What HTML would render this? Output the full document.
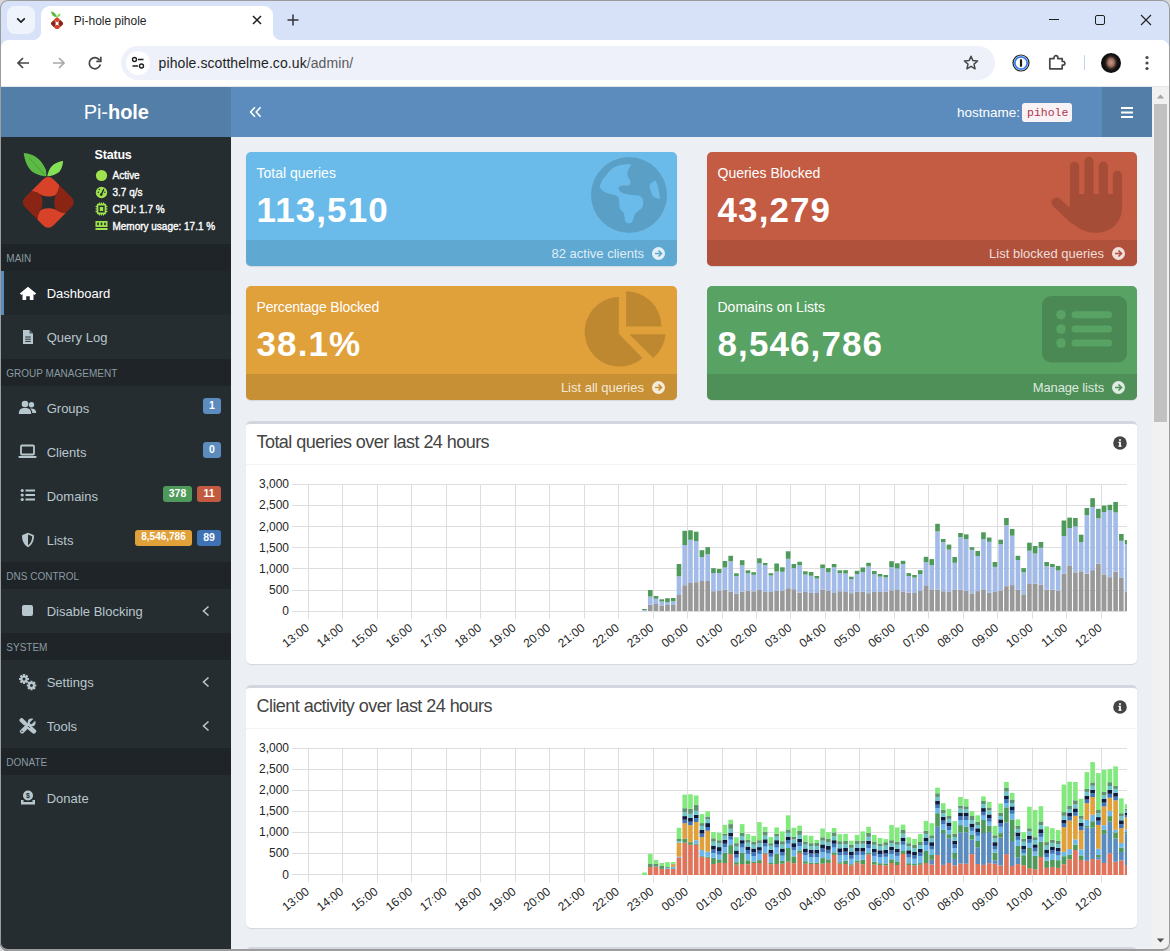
<!DOCTYPE html><html><head><meta charset="utf-8"><title>Pi-hole</title><style>*{box-sizing:border-box}html,body{margin:0;padding:0}
body{width:1170px;height:951px;overflow:hidden;position:relative;background:#d8d8d8;font-family:"Liberation Sans",sans-serif}
.a{position:absolute}.t{position:absolute;white-space:nowrap;line-height:1}
</style></head><body><div class="a" style="left:0px;top:0px;width:1170px;height:87px;background:#d7e2f8;"></div>
<div class="a" style="left:0px;top:40px;width:1170px;height:46px;background:#fff;"></div>
<div class="a" style="left:1px;top:40px;width:8px;height:8px;background:radial-gradient(circle at 100% 100%,#fff 7.5px,#d7e2f8 8.5px);"></div>
<div class="a" style="left:1161px;top:40px;width:8px;height:8px;background:radial-gradient(circle at 0 100%,#fff 7.5px,#d7e2f8 8.5px);"></div>
<div class="a" style="left:0px;top:86px;width:1170px;height:1px;background:#e4e6ea;"></div>
<div class="a" style="left:7px;top:6px;width:28px;height:28px;background:#eef3fc;border-radius:8px"></div>
<svg class="a" style="left:14px;top:13px" width="14" height="14" viewBox="0 0 14 14"><path d="M3.2 5.3 L7 9.1 L10.8 5.3" fill="none" stroke="#1f1f1f" stroke-width="1.7"/></svg>
<div class="a" style="left:41px;top:6px;width:232px;height:40px;background:#fff;border-radius:9px 9px 0 0"></div>
<div class="a" style="left:33px;top:32px;width:8px;height:8px;background:radial-gradient(circle at 0 0,#d7e2f8 7.5px,#fff 8.5px);"></div>
<div class="a" style="left:273px;top:32px;width:8px;height:8px;background:radial-gradient(circle at 100% 0,#d7e2f8 7.5px,#fff 8.5px);"></div>
<svg class="a" style="left:50px;top:11px" width="14" height="18" viewBox="1 1 54 74">
<path d="M3.7 3.1 C14 3.5 21.5 10 25.8 19.4 C26.5 22 26.3 24 26.3 26.3 C22 26 15 24.5 11 20.5 C7 16.5 4.5 10 3.7 3.1Z" fill="#5dbb45"/>
<path d="M9.5 8.5 L24.5 24.5" stroke="#3f8f33" stroke-width="0.7"/>
<path d="M43.1 11 C38 11.5 33 14 30 18.4 C28.5 21 27.5 24 27.3 26.3 C31 26 35 25 38.5 22.5 C41.5 20 42.8 15 43.1 11Z" fill="#84e055"/>
<defs><clipPath id="dm2"><path d="M25.4 9.2 Q30.3 4.3 35.2 9.2 L51.4 25.4 Q56.3 30.3 51.4 35.2 L35.2 51.4 Q30.3 56.3 25.4 51.4 L9.2 35.2 Q4.3 30.3 9.2 25.4Z"/></clipPath></defs>
<g transform="translate(-2 22) translate(30.3 30.3) scale(1.085) translate(-30.3 -30.3)"><g clip-path="url(#dm2)">
<path d="M10.2 20.9 L5 16 L30.3 -8 L44.6 5 L39.7 10.2 C41.2 12.5 40.6 19 37.5 23 C34.5 25.5 26.5 25.5 23 23.1 C19 20 12.5 19.4 10.2 20.9Z" fill="#d84229"/>
<path d="M10.2 20.9 L5 16 L30.3 -8 L44.6 5 L39.7 10.2 C41.2 12.5 40.6 19 37.5 23 C34.5 25.5 26.5 25.5 23 23.1 C19 20 12.5 19.4 10.2 20.9Z" fill="#8a2415" transform="rotate(90 30.3 30.3)"/>
<path d="M10.2 20.9 L5 16 L30.3 -8 L44.6 5 L39.7 10.2 C41.2 12.5 40.6 19 37.5 23 C34.5 25.5 26.5 25.5 23 23.1 C19 20 12.5 19.4 10.2 20.9Z" fill="#d84229" transform="rotate(180 30.3 30.3)"/>
<path d="M10.2 20.9 L5 16 L30.3 -8 L44.6 5 L39.7 10.2 C41.2 12.5 40.6 19 37.5 23 C34.5 25.5 26.5 25.5 23 23.1 C19 20 12.5 19.4 10.2 20.9Z" fill="#8a2415" transform="rotate(270 30.3 30.3)"/>
</g></g>
</svg>
<div class="t" style="left:73.80px;top:14.74px;font-size:12px;color:#1f1f1f;font-weight:normal;letter-spacing:0px;font-family:'Liberation Sans',sans-serif;">Pi-hole pihole</div>
<svg class="a" style="left:251px;top:14px" width="12" height="12" viewBox="0 0 12 12"><path d="M2 2 L10 10 M10 2 L2 10" stroke="#1f1f1f" stroke-width="1.5"/></svg>
<svg class="a" style="left:286px;top:13px" width="14" height="14" viewBox="0 0 14 14"><path d="M7 1.5 V12.5 M1.5 7 H12.5" stroke="#333" stroke-width="1.5"/></svg>
<div class="a" style="left:1049px;top:19px;width:10px;height:1px;background:#1f1f1f;"></div>
<div class="a" style="left:1095px;top:15px;width:10px;height:10px;background:transparent;border:1px solid #1f1f1f;border-radius:2px"></div>
<svg class="a" style="left:1140px;top:14px" width="12" height="12" viewBox="0 0 12 12"><path d="M1 1 L11 11 M11 1 L1 11" stroke="#1f1f1f" stroke-width="1.1"/></svg>
<svg class="a" style="left:15px;top:55px" width="16" height="16" viewBox="0 0 16 16"><path d="M14 8 H3 M8 3 L3 8 L8 13" fill="none" stroke="#474747" stroke-width="1.7"/></svg>
<svg class="a" style="left:51px;top:55px" width="16" height="16" viewBox="0 0 16 16"><path d="M2 8 H13 M8 3 L13 8 L8 13" fill="none" stroke="#a8a8a8" stroke-width="1.7"/></svg>
<svg class="a" style="left:87px;top:55px" width="16" height="16" viewBox="0 0 16 16"><path d="M12.6 5.2 A5.6 5.6 0 1 0 13.3 9.5" fill="none" stroke="#474747" stroke-width="1.7"/><path d="M13.8 1.8 V6.3 H9.3" fill="none" stroke="#474747" stroke-width="1.7"/></svg>
<div class="a" style="left:121px;top:46px;width:874px;height:34px;background:#eef1f9;border-radius:17px"></div>
<div class="a" style="left:126px;top:51px;width:24px;height:24px;background:#fff;border-radius:12px"></div>
<svg class="a" style="left:130px;top:55px" width="16" height="16" viewBox="0 0 16 16"><circle cx="4.5" cy="4.5" r="2" fill="none" stroke="#1f1f1f" stroke-width="1.4"/><path d="M8 4.5 H13.5" stroke="#1f1f1f" stroke-width="1.5"/><circle cx="11.5" cy="11" r="2" fill="none" stroke="#1f1f1f" stroke-width="1.4"/><path d="M2.5 11 H8" stroke="#1f1f1f" stroke-width="1.5"/></svg>
<div class="t" style="left:158.60px;top:56.45px;font-size:14px;color:#1f1f1f;font-weight:normal;letter-spacing:0.08px;font-family:'Liberation Sans',sans-serif;">pihole.scotthelme.co.uk<span style="color:#5a5a5a">/admin/</span></div>
<svg class="a" style="left:962px;top:54px" width="18" height="18" viewBox="0 0 18 18"><path d="M9 2.2 L10.9 6.6 L15.6 7 L12 10.1 L13.1 14.8 L9 12.3 L4.9 14.8 L6 10.1 L2.4 7 L7.1 6.6Z" fill="none" stroke="#474747" stroke-width="1.5" stroke-linejoin="round"/></svg>
<svg class="a" style="left:1012px;top:54px" width="18" height="18" viewBox="0 0 18 18"><circle cx="9" cy="9" r="8" fill="#fff" stroke="#1f1f1f" stroke-width="1.2"/><circle cx="9" cy="9" r="6.2" fill="none" stroke="#3b7de9" stroke-width="1.8"/><rect x="7.9" y="5.2" width="2.2" height="7.6" rx="0.6" fill="#1f1f1f"/></svg>
<svg class="a" style="left:1047px;top:53px" width="20" height="20" viewBox="0 0 20 20"><path d="M2.8 5.6 H7 V4.6 A1.9 1.9 0 0 1 10.8 4.6 V5.6 H15.2 V8.3 H16 A1.9 1.9 0 0 1 16 12.1 H15.2 V15.8 H2.8Z" fill="none" stroke="#474747" stroke-width="1.7" stroke-linejoin="round"/></svg>
<div class="a" style="left:1084px;top:55px;width:1px;height:15px;background:#c7d3ee;"></div>
<div class="a" style="left:1101px;top:53px;width:20px;height:20px;border-radius:10px;background:radial-gradient(ellipse 5px 6px at 50% 48%,#c99a85 0,#a07060 3px,#2a201c 5.5px,#121212 7px,#0a0a0a 10px)"></div>
<svg class="a" style="left:1143px;top:55px" width="8" height="16" viewBox="0 0 8 16"><circle cx="4" cy="2.5" r="1.6" fill="#474747"/><circle cx="4" cy="8" r="1.6" fill="#474747"/><circle cx="4" cy="13.5" r="1.6" fill="#474747"/></svg>
<div class="a" style="left:0px;top:87px;width:1170px;height:864px;background:#ecf0f5;"></div>
<div class="a" style="left:0px;top:87px;width:231px;height:864px;background:#262d30;"></div>
<div class="a" style="left:0px;top:87px;width:231px;height:50px;background:#527ea7;"></div>
<div class="a" style="left:231px;top:87px;width:871px;height:50px;background:#5b8cbd;"></div>
<div class="a" style="left:1102px;top:87px;width:50px;height:50px;background:#527ea7;"></div>
<div class="t" style="left:83.70px;top:102.07px;font-size:20px;color:#fff;font-weight:normal;letter-spacing:-0.05px;font-family:'Liberation Sans',sans-serif;">Pi-<b>hole</b></div>
<svg class="a" style="left:249px;top:106px" width="14" height="12" viewBox="0 0 14 12"><path d="M6 1.2 L1.6 6 L6 10.8 M11.6 1.2 L7.2 6 L11.6 10.8" fill="none" stroke="#fff" stroke-width="1.6"/></svg>
<div class="t" style="left:957.00px;top:105.57px;font-size:13.5px;color:#fff;font-weight:normal;letter-spacing:0px;font-family:'Liberation Sans',sans-serif;">hostname:</div>
<div class="a" style="left:1022px;top:103px;width:50px;height:19px;background:#f9f2f4;border-radius:3px"></div>
<div class="t" style="left:1027.00px;top:106.77px;font-size:11.5px;color:#b0334f;font-weight:normal;letter-spacing:0px;font-family:'Liberation Mono',monospace;">pihole</div>
<svg class="a" style="left:1120px;top:106px" width="14" height="13" viewBox="0 0 14 13"><path d="M1 1 H13 V3 H1Z M1 5.5 H13 V7.5 H1Z M1 10 H13 V12 H1Z" fill="#fff"/></svg>
<svg class="a" style="left:20px;top:150px" width="56" height="80" viewBox="0 0 56 80">
<path d="M3.7 3.1 C14 3.5 21.5 10 25.8 19.4 C26.5 22 26.3 24 26.3 26.3 C22 26 15 24.5 11 20.5 C7 16.5 4.5 10 3.7 3.1Z" fill="#5dbb45"/>
<path d="M9.5 8.5 L24.5 24.5" stroke="#3f8f33" stroke-width="0.7"/>
<path d="M43.1 11 C38 11.5 33 14 30 18.4 C28.5 21 27.5 24 27.3 26.3 C31 26 35 25 38.5 22.5 C41.5 20 42.8 15 43.1 11Z" fill="#84e055"/>
<defs><clipPath id="dm"><path d="M25.4 9.2 Q30.3 4.3 35.2 9.2 L51.4 25.4 Q56.3 30.3 51.4 35.2 L35.2 51.4 Q30.3 56.3 25.4 51.4 L9.2 35.2 Q4.3 30.3 9.2 25.4Z"/></clipPath></defs>
<g transform="translate(-2 22) translate(30.3 30.3) scale(1.085) translate(-30.3 -30.3)"><g clip-path="url(#dm)">
<path d="M10.2 20.9 L5 16 L30.3 -8 L44.6 5 L39.7 10.2 C41.2 12.5 40.6 19 37.5 23 C34.5 25.5 26.5 25.5 23 23.1 C19 20 12.5 19.4 10.2 20.9Z" fill="#d84229"/>
<path d="M10.2 20.9 L5 16 L30.3 -8 L44.6 5 L39.7 10.2 C41.2 12.5 40.6 19 37.5 23 C34.5 25.5 26.5 25.5 23 23.1 C19 20 12.5 19.4 10.2 20.9Z" fill="#8a2415" transform="rotate(90 30.3 30.3)"/>
<path d="M10.2 20.9 L5 16 L30.3 -8 L44.6 5 L39.7 10.2 C41.2 12.5 40.6 19 37.5 23 C34.5 25.5 26.5 25.5 23 23.1 C19 20 12.5 19.4 10.2 20.9Z" fill="#d84229" transform="rotate(180 30.3 30.3)"/>
<path d="M10.2 20.9 L5 16 L30.3 -8 L44.6 5 L39.7 10.2 C41.2 12.5 40.6 19 37.5 23 C34.5 25.5 26.5 25.5 23 23.1 C19 20 12.5 19.4 10.2 20.9Z" fill="#8a2415" transform="rotate(270 30.3 30.3)"/>
</g></g>
</svg>
<div class="t" style="left:94.60px;top:149.12px;font-size:12.5px;color:#fff;font-weight:bold;letter-spacing:-0.2px;font-family:'Liberation Sans',sans-serif;">Status</div>
<svg class="a" style="left:95px;top:169px" width="13" height="13" viewBox="0 0 13 13"><circle cx="6.5" cy="6.5" r="5.6" fill="#9ee34e"/></svg>
<svg class="a" style="left:95px;top:186px" width="13" height="13" viewBox="0 0 13 13"><circle cx="6.5" cy="6.5" r="5.7" fill="#9ee34e"/><path d="M6.3 8.6 L8.6 3.6" stroke="#262d30" stroke-width="1.4" stroke-linecap="round"/><circle cx="6.2" cy="8.6" r="1.3" fill="#262d30"/><circle cx="3.3" cy="6.2" r="0.75" fill="#262d30"/><circle cx="4.4" cy="3.6" r="0.75" fill="#262d30"/><circle cx="9.9" cy="6.2" r="0.75" fill="#262d30"/></svg>
<svg class="a" style="left:95px;top:202px" width="13" height="14" viewBox="0 0 13 14"><rect x="2.5" y="2.5" width="8" height="9" rx="1" fill="none" stroke="#9ee34e" stroke-width="1.8"/><rect x="4.8" y="5" width="3.4" height="4" fill="#9ee34e"/><path d="M4.5 0.5 V2.5 M6.5 0.5 V2.5 M8.5 0.5 V2.5 M4.5 11.5 V13.5 M6.5 11.5 V13.5 M8.5 11.5 V13.5 M0.5 4.5 H2.5 M0.5 7 H2.5 M0.5 9.5 H2.5 M10.5 4.5 H12.5 M10.5 7 H12.5 M10.5 9.5 H12.5" stroke="#9ee34e" stroke-width="1"/></svg>
<svg class="a" style="left:95px;top:220px" width="13" height="11" viewBox="0 0 13 11"><rect x="0.5" y="1" width="12" height="6" fill="#9ee34e"/><rect x="2.2" y="2.6" width="1.6" height="2.6" fill="#262d30"/><rect x="5.7" y="2.6" width="1.6" height="2.6" fill="#262d30"/><rect x="9.2" y="2.6" width="1.6" height="2.6" fill="#262d30"/><rect x="0.5" y="8" width="12" height="2" fill="#9ee34e"/></svg>
<div class="t" style="left:112.50px;top:171.34px;font-size:10px;color:#fff;font-weight:normal;letter-spacing:-0.01px;font-family:'Liberation Sans',sans-serif;-webkit-text-stroke:0.35px #fff">Active</div>
<div class="t" style="left:112.50px;top:188.34px;font-size:10px;color:#fff;font-weight:normal;letter-spacing:-0.01px;font-family:'Liberation Sans',sans-serif;-webkit-text-stroke:0.35px #fff">3.7 q/s</div>
<div class="t" style="left:112.50px;top:204.84px;font-size:10px;color:#fff;font-weight:normal;letter-spacing:-0.01px;font-family:'Liberation Sans',sans-serif;-webkit-text-stroke:0.35px #fff">CPU: 1.7 %</div>
<div class="t" style="left:112.50px;top:221.53px;font-size:10px;color:#fff;font-weight:normal;letter-spacing:-0.01px;font-family:'Liberation Sans',sans-serif;-webkit-text-stroke:0.35px #fff">Memory usage: 17.1 %</div>
<div class="a" style="left:1px;top:244px;width:230px;height:27px;background:#1e2427;"></div>
<div class="t" style="left:6.30px;top:253.53px;font-size:10px;color:#8a9ba3;font-weight:normal;letter-spacing:0px;font-family:'Liberation Sans',sans-serif;">MAIN</div>
<div class="a" style="left:1px;top:271px;width:230px;height:44px;background:#20282c;"></div>
<div class="a" style="left:1px;top:271px;width:3px;height:44px;background:#5b8cbd;"></div>
<div class="t" style="left:46.70px;top:286.60px;font-size:13px;color:#fff;font-weight:normal;letter-spacing:0px;font-family:'Liberation Sans',sans-serif;">Dashboard</div>
<svg class="a" style="left:19px;top:286px" width="18" height="15" viewBox="0 0 18 15"><path d="M9 0.8 L17.2 7.6 L15.6 8.9 L14.5 8 V14 H10.8 V10.2 H7.2 V14 H3.5 V8 L2.4 8.9 L0.8 7.6Z" fill="#fff"/></svg>
<div class="t" style="left:46.70px;top:330.60px;font-size:13px;color:#b8c7ce;font-weight:normal;letter-spacing:0px;font-family:'Liberation Sans',sans-serif;">Query Log</div>
<svg class="a" style="left:22px;top:329px" width="12" height="16" viewBox="0 0 12 16"><path d="M1 1 H7.5 L11 4.5 V15 H1Z" fill="#b8c7ce"/><path d="M7.5 1 V4.5 H11" fill="#4d5a60"/><path d="M3.2 8 H8.8 M3.2 10.2 H8.8 M3.2 12.4 H8.8" stroke="#262d30" stroke-width="1"/></svg>
<div class="a" style="left:1px;top:359px;width:230px;height:27px;background:#1e2427;"></div>
<div class="t" style="left:6.30px;top:368.54px;font-size:10px;color:#8a9ba3;font-weight:normal;letter-spacing:0px;font-family:'Liberation Sans',sans-serif;">GROUP MANAGEMENT</div>
<div class="t" style="left:46.70px;top:401.60px;font-size:13px;color:#b8c7ce;font-weight:normal;letter-spacing:0px;font-family:'Liberation Sans',sans-serif;">Groups</div>
<svg class="a" style="left:18px;top:400px" width="19" height="15" viewBox="0 0 19 15"><circle cx="7" cy="4" r="3.3" fill="#b8c7ce"/><circle cx="13.5" cy="4.8" r="2.7" fill="#b8c7ce"/><path d="M0.8 14 C0.8 9.5 3 8 7 8 C11 8 13.2 9.5 13.2 14Z" fill="#b8c7ce"/><path d="M12 8.5 C16 8.2 18.2 9.5 18.2 13 H14.3 C14.2 11 13.5 9.5 12 8.5Z" fill="#b8c7ce"/></svg>
<div class="t" style="left:46.70px;top:445.60px;font-size:13px;color:#b8c7ce;font-weight:normal;letter-spacing:0px;font-family:'Liberation Sans',sans-serif;">Clients</div>
<svg class="a" style="left:18px;top:444px" width="19" height="15" viewBox="0 0 19 15"><rect x="3" y="1.5" width="13" height="9" rx="1" fill="none" stroke="#b8c7ce" stroke-width="1.8"/><path d="M0.5 12 H18.5 V13 Q18.5 14 17.5 14 H1.5 Q0.5 14 0.5 13Z" fill="#b8c7ce"/></svg>
<div class="t" style="left:46.70px;top:489.60px;font-size:13px;color:#b8c7ce;font-weight:normal;letter-spacing:0px;font-family:'Liberation Sans',sans-serif;">Domains</div>
<svg class="a" style="left:20px;top:488px" width="16" height="14" viewBox="0 0 16 14"><circle cx="2.2" cy="2.5" r="1.6" fill="#b8c7ce"/><circle cx="2.2" cy="7" r="1.6" fill="#b8c7ce"/><circle cx="2.2" cy="11.5" r="1.6" fill="#b8c7ce"/><path d="M5.5 2.5 H15 M5.5 7 H15 M5.5 11.5 H15" stroke="#b8c7ce" stroke-width="1.8"/></svg>
<div class="t" style="left:46.70px;top:533.60px;font-size:13px;color:#b8c7ce;font-weight:normal;letter-spacing:0px;font-family:'Liberation Sans',sans-serif;">Lists</div>
<svg class="a" style="left:21px;top:532px" width="14" height="16" viewBox="0 0 14 16"><path d="M7 0.8 L13 3.2 C13 9 11 13 7 15.2 C3 13 1 9 1 3.2Z" fill="#b8c7ce"/><path d="M7 2.6 L11.2 4.3 C11.1 8.6 9.6 11.6 7 13.3Z" fill="#262d30"/></svg>
<div class="a" style="left:1px;top:562px;width:230px;height:27px;background:#1e2427;"></div>
<div class="t" style="left:6.30px;top:571.53px;font-size:10px;color:#8a9ba3;font-weight:normal;letter-spacing:0px;font-family:'Liberation Sans',sans-serif;">DNS CONTROL</div>
<div class="t" style="left:46.70px;top:604.60px;font-size:13px;color:#b8c7ce;font-weight:normal;letter-spacing:0px;font-family:'Liberation Sans',sans-serif;">Disable Blocking</div>
<svg class="a" style="left:201px;top:605px" width="10" height="12" viewBox="0 0 10 12"><path d="M7.5 1.5 L2.5 6 L7.5 10.5" fill="none" stroke="#b8c7ce" stroke-width="1.6"/></svg>
<svg class="a" style="left:21px;top:604px" width="13" height="13" viewBox="0 0 13 13"><rect x="1" y="1" width="11" height="11" rx="2" fill="#b8c7ce"/></svg>
<div class="a" style="left:1px;top:633px;width:230px;height:27px;background:#1e2427;"></div>
<div class="t" style="left:6.30px;top:642.53px;font-size:10px;color:#8a9ba3;font-weight:normal;letter-spacing:0px;font-family:'Liberation Sans',sans-serif;">SYSTEM</div>
<div class="t" style="left:46.70px;top:675.60px;font-size:13px;color:#b8c7ce;font-weight:normal;letter-spacing:0px;font-family:'Liberation Sans',sans-serif;">Settings</div>
<svg class="a" style="left:201px;top:676px" width="10" height="12" viewBox="0 0 10 12"><path d="M7.5 1.5 L2.5 6 L7.5 10.5" fill="none" stroke="#b8c7ce" stroke-width="1.6"/></svg>
<svg class="a" style="left:18px;top:673px" width="20" height="19" viewBox="0 0 20 19"><circle cx="6" cy="6" r="3.6" fill="#b8c7ce"/><rect x="4.9" y="0.9999999999999998" width="2.2" height="2.2" rx="0.4" fill="#b8c7ce" transform="rotate(0.0 6 6)"/><rect x="4.9" y="0.9999999999999998" width="2.2" height="2.2" rx="0.4" fill="#b8c7ce" transform="rotate(45.0 6 6)"/><rect x="4.9" y="0.9999999999999998" width="2.2" height="2.2" rx="0.4" fill="#b8c7ce" transform="rotate(90.0 6 6)"/><rect x="4.9" y="0.9999999999999998" width="2.2" height="2.2" rx="0.4" fill="#b8c7ce" transform="rotate(135.0 6 6)"/><rect x="4.9" y="0.9999999999999998" width="2.2" height="2.2" rx="0.4" fill="#b8c7ce" transform="rotate(180.0 6 6)"/><rect x="4.9" y="0.9999999999999998" width="2.2" height="2.2" rx="0.4" fill="#b8c7ce" transform="rotate(225.0 6 6)"/><rect x="4.9" y="0.9999999999999998" width="2.2" height="2.2" rx="0.4" fill="#b8c7ce" transform="rotate(270.0 6 6)"/><rect x="4.9" y="0.9999999999999998" width="2.2" height="2.2" rx="0.4" fill="#b8c7ce" transform="rotate(315.0 6 6)"/><circle cx="6" cy="6" r="1.512" fill="#262d30"/><circle cx="13.5" cy="12.5" r="3.4" fill="#b8c7ce"/><rect x="12.4" y="7.699999999999999" width="2.2" height="2.2" rx="0.4" fill="#b8c7ce" transform="rotate(0.0 13.5 12.5)"/><rect x="12.4" y="7.699999999999999" width="2.2" height="2.2" rx="0.4" fill="#b8c7ce" transform="rotate(45.0 13.5 12.5)"/><rect x="12.4" y="7.699999999999999" width="2.2" height="2.2" rx="0.4" fill="#b8c7ce" transform="rotate(90.0 13.5 12.5)"/><rect x="12.4" y="7.699999999999999" width="2.2" height="2.2" rx="0.4" fill="#b8c7ce" transform="rotate(135.0 13.5 12.5)"/><rect x="12.4" y="7.699999999999999" width="2.2" height="2.2" rx="0.4" fill="#b8c7ce" transform="rotate(180.0 13.5 12.5)"/><rect x="12.4" y="7.699999999999999" width="2.2" height="2.2" rx="0.4" fill="#b8c7ce" transform="rotate(225.0 13.5 12.5)"/><rect x="12.4" y="7.699999999999999" width="2.2" height="2.2" rx="0.4" fill="#b8c7ce" transform="rotate(270.0 13.5 12.5)"/><rect x="12.4" y="7.699999999999999" width="2.2" height="2.2" rx="0.4" fill="#b8c7ce" transform="rotate(315.0 13.5 12.5)"/><circle cx="13.5" cy="12.5" r="1.428" fill="#262d30"/></svg>
<div class="t" style="left:46.70px;top:719.60px;font-size:13px;color:#b8c7ce;font-weight:normal;letter-spacing:0px;font-family:'Liberation Sans',sans-serif;">Tools</div>
<svg class="a" style="left:201px;top:720px" width="10" height="12" viewBox="0 0 10 12"><path d="M7.5 1.5 L2.5 6 L7.5 10.5" fill="none" stroke="#b8c7ce" stroke-width="1.6"/></svg>
<svg class="a" style="left:19px;top:718px" width="18" height="16" viewBox="0 0 18 16"><path d="M2.6 2.2 L5.8 5.2" stroke="#b8c7ce" stroke-width="4.2" stroke-linecap="round"/><path d="M5 4.5 L11 10" stroke="#b8c7ce" stroke-width="1.8"/><path d="M10.6 9.6 L14.8 13.2" stroke="#b8c7ce" stroke-width="4.8" stroke-linecap="round"/><path d="M3 13.4 L10.5 6" stroke="#b8c7ce" stroke-width="4.2" stroke-linecap="round"/><circle cx="12.6" cy="4.4" r="3.9" fill="#b8c7ce"/><path d="M12.2 4.8 L16.5 0.5" stroke="#262d30" stroke-width="2.6" stroke-linecap="round"/><circle cx="3" cy="13.3" r="0.8" fill="#262d30"/><path d="M9.2 8.2 L10.8 9.8" stroke="#262d30" stroke-width="0.9"/></svg>
<div class="a" style="left:1px;top:748px;width:230px;height:27px;background:#1e2427;"></div>
<div class="t" style="left:6.30px;top:757.53px;font-size:10px;color:#8a9ba3;font-weight:normal;letter-spacing:0px;font-family:'Liberation Sans',sans-serif;">DONATE</div>
<div class="t" style="left:46.70px;top:791.60px;font-size:13px;color:#b8c7ce;font-weight:normal;letter-spacing:0px;font-family:'Liberation Sans',sans-serif;">Donate</div>
<svg class="a" style="left:20px;top:790px" width="16" height="15" viewBox="0 0 16 15"><circle cx="8" cy="5.5" r="5" fill="#b8c7ce"/><text x="8" y="8" font-size="7" font-weight="bold" text-anchor="middle" fill="#262d30" font-family="Liberation Sans">$</text><path d="M1 10 H3.5 V12 H12.5 V10 H15 V14.5 H1Z" fill="#b8c7ce"/></svg>
<div class="a" style="left:203px;top:398px;width:18px;height:16px;background:#5b8cbd;border-radius:3px"></div>
<div class="t" style="left:203px;top:400px;width:18px;text-align:center;font-size:10.5px;font-weight:bold;color:#fff">1</div>
<div class="a" style="left:203px;top:442px;width:18px;height:16px;background:#5b8cbd;border-radius:3px"></div>
<div class="t" style="left:203px;top:444px;width:18px;text-align:center;font-size:10.5px;font-weight:bold;color:#fff">0</div>
<div class="a" style="left:163px;top:486px;width:29px;height:16px;background:#4e9a5a;border-radius:3px"></div>
<div class="t" style="left:163px;top:488px;width:29px;text-align:center;font-size:10.5px;font-weight:bold;color:#fff">378</div>
<div class="a" style="left:197px;top:486px;width:24px;height:16px;background:#c25a40;border-radius:3px"></div>
<div class="t" style="left:197px;top:488px;width:24px;text-align:center;font-size:10.5px;font-weight:bold;color:#fff">11</div>
<div class="a" style="left:135px;top:530px;width:57px;height:16px;background:#e0a03a;border-radius:3px"></div>
<div class="t" style="left:135px;top:532px;width:57px;text-align:center;font-size:10px;font-weight:bold;color:#fff">8,546,786</div>
<div class="a" style="left:197px;top:530px;width:24px;height:16px;background:#3f72b5;border-radius:3px"></div>
<div class="t" style="left:197px;top:532px;width:24px;text-align:center;font-size:10.5px;font-weight:bold;color:#fff">89</div>
<div class="a" style="left:246px;top:152px;width:431px;height:114px;background:#6abbe9;border-radius:5px;overflow:hidden;box-shadow:0 1px 1px rgba(0,0,0,0.1)"><div class="a" style="left:0;top:88px;width:431px;height:26px;background:#5fa8d2"></div></div>
<svg class="a" style="left:591px;top:157px" width="76" height="76" viewBox="0 0 76 76"><defs><mask id="gm"><rect width="76" height="76" fill="#fff"/>
<path d="M40.5 7.4 C37 12 35.5 16 36.7 18.7 C37.5 22 40.5 24 39.5 25.8 C39 28 37 28.7 37 28.7 C34 28.5 30 28.2 29.1 29.2 C27 30 27 31.5 27.7 32 C29 35 31 36 33.9 36.7 C38 38.2 44 38 47.1 38.6 C50 39.5 52 41 51.9 43.3 C52.5 46 52 49 50.9 50.9 C49 53 46.5 54 45.2 55.7 C43 58 42.8 61 41.9 63.2 C41 65.5 39 66.8 37.7 66.5 C35.5 66 34 64.5 33.9 63.2 C33.5 60 33.5 57 32.5 55.7 C31 53.5 28.8 52.5 28.7 50.9 C28 47 28.5 43 27.7 41.5 C26.5 39 25 38.5 23.5 38.1 C20 37 16 36.5 13.1 34.8 C10.5 33 9 31 8.8 29.2 C10 25 12 21 14.9 18.7 C18 14 21.5 11 25.4 9.3 C30 7.5 36 7 40.5 7.4Z" fill="#000"/>
<path d="M58.5 28.2 C60 25.5 62 24.3 64.6 23.5 C67 28 68.5 35 68.9 41.9 C66 41.5 63.5 40.5 62.3 39.5 C60.8 37 60 35 59.4 32.9 C59 31 58.5 29.5 58.5 28.2Z" fill="#000"/>
</mask></defs><circle cx="38" cy="38" r="38" fill="rgba(0,0,0,0.15)" mask="url(#gm)"/></svg>
<div class="t" style="left:256.50px;top:166.35px;font-size:14px;color:#fff;font-weight:normal;letter-spacing:0px;font-family:'Liberation Sans',sans-serif;">Total queries</div>
<div class="t" style="left:256.50px;top:191.97px;font-size:35px;color:#fff;font-weight:bold;letter-spacing:1.1px;font-family:'Liberation Sans',sans-serif;">113,510</div>
<div class="t" style="right:526.00px;top:246.70px;font-size:13px;color:rgba(255,255,255,0.82);font-weight:normal;letter-spacing:0px;font-family:'Liberation Sans',sans-serif;text-align:right;">82 active clients</div>
<svg class="a" style="left:651.5px;top:247px" width="13" height="13" viewBox="0 0 13 13"><circle cx="6.5" cy="6.5" r="6.5" fill="rgba(255,255,255,0.82)"/><path d="M3 6.5 H9.5 M6.5 3.5 L9.5 6.5 L6.5 9.5" fill="none" stroke="#5fa8d2" stroke-width="1.6"/></svg>
<div class="a" style="left:707px;top:152px;width:430px;height:114px;background:#c45b43;border-radius:5px;overflow:hidden;box-shadow:0 1px 1px rgba(0,0,0,0.1)"><div class="a" style="left:0;top:88px;width:430px;height:26px;background:#b0513b"></div></div>
<svg class="a" style="left:1040px;top:150px" width="90" height="90" viewBox="0 0 90 90"><g fill="none" stroke="rgba(0,0,0,0.15)" stroke-linecap="round"></g><g opacity="0.15">
<path d="M34.55 16.4 V50 M49.05 11.5 V50 M63.3 16.2 V50" stroke="#000" stroke-width="9.3" stroke-linecap="round"/>
<path d="M77.5 25.4 V56" stroke="#000" stroke-width="9.2" stroke-linecap="round"/>
<path d="M16.5 52.5 L34 69" stroke="#000" stroke-width="10" stroke-linecap="round"/>
<path d="M29.9 44 H82.1 V58 C82.1 72 71 82.8 56 82.8 C46 82.8 39 79 33 74 L25 66.5 L29.9 56Z" fill="#000"/>
</g></svg>
<div class="t" style="left:717.50px;top:166.35px;font-size:14px;color:#fff;font-weight:normal;letter-spacing:0px;font-family:'Liberation Sans',sans-serif;">Queries Blocked</div>
<div class="t" style="left:717.50px;top:191.97px;font-size:35px;color:#fff;font-weight:bold;letter-spacing:1.1px;font-family:'Liberation Sans',sans-serif;">43,279</div>
<div class="t" style="right:66.00px;top:246.70px;font-size:13px;color:rgba(255,255,255,0.82);font-weight:normal;letter-spacing:0px;font-family:'Liberation Sans',sans-serif;text-align:right;">List blocked queries</div>
<svg class="a" style="left:1111.5px;top:247px" width="13" height="13" viewBox="0 0 13 13"><circle cx="6.5" cy="6.5" r="6.5" fill="rgba(255,255,255,0.82)"/><path d="M3 6.5 H9.5 M6.5 3.5 L9.5 6.5 L6.5 9.5" fill="none" stroke="#b0513b" stroke-width="1.6"/></svg>
<div class="a" style="left:246px;top:286px;width:431px;height:114px;background:#e0a03a;border-radius:5px;overflow:hidden;box-shadow:0 1px 1px rgba(0,0,0,0.1)"><div class="a" style="left:0;top:88px;width:431px;height:26px;background:#c89034"></div></div>
<svg class="a" style="left:580px;top:285px" width="90" height="90" viewBox="0 0 90 90"><path d="M38.8 12 A34.8 34.8 0 1 0 62.5 72.9 L38.8 48.7 Z" fill="rgba(0,0,0,0.15)"/><path d="M46.2 6.2 A35.2 35.2 0 0 1 81.4 41.4 H46.2Z" fill="rgba(0,0,0,0.15)"/><path d="M49.2 49.2 H85.6 A36 36 0 0 1 73.3 72.9Z" fill="rgba(0,0,0,0.15)"/></svg>
<div class="t" style="left:256.50px;top:300.35px;font-size:14px;color:#fff;font-weight:normal;letter-spacing:-0.15px;font-family:'Liberation Sans',sans-serif;">Percentage Blocked</div>
<div class="t" style="left:256.50px;top:325.97px;font-size:35px;color:#fff;font-weight:bold;letter-spacing:1.1px;font-family:'Liberation Sans',sans-serif;">38.1%</div>
<div class="t" style="right:526.00px;top:380.70px;font-size:13px;color:rgba(255,255,255,0.82);font-weight:normal;letter-spacing:0px;font-family:'Liberation Sans',sans-serif;text-align:right;">List all queries</div>
<svg class="a" style="left:651.5px;top:381px" width="13" height="13" viewBox="0 0 13 13"><circle cx="6.5" cy="6.5" r="6.5" fill="rgba(255,255,255,0.82)"/><path d="M3 6.5 H9.5 M6.5 3.5 L9.5 6.5 L6.5 9.5" fill="none" stroke="#c89034" stroke-width="1.6"/></svg>
<div class="a" style="left:707px;top:286px;width:430px;height:114px;background:#58a263;border-radius:5px;overflow:hidden;box-shadow:0 1px 1px rgba(0,0,0,0.1)"><div class="a" style="left:0;top:88px;width:430px;height:26px;background:#4e9058"></div></div>
<svg class="a" style="left:1042px;top:296px" width="86" height="67" viewBox="0 0 86 67"><defs><mask id="lm"><rect width="86" height="67" fill="#fff"/>
<circle cx="19" cy="18.7" r="4.8" fill="#000"/><circle cx="19" cy="33" r="4.8" fill="#000"/><circle cx="19" cy="47" r="4.8" fill="#000"/>
<rect x="29.5" y="15.2" width="40.5" height="7" rx="3.5" fill="#000"/><rect x="29.5" y="29.5" width="40.5" height="7" rx="3.5" fill="#000"/><rect x="29.5" y="43.5" width="40.5" height="7" rx="3.5" fill="#000"/>
</mask></defs><rect x="0" y="0" width="85" height="66.5" rx="9" fill="rgba(0,0,0,0.15)" mask="url(#lm)"/></svg>
<div class="t" style="left:717.50px;top:300.35px;font-size:14px;color:#fff;font-weight:normal;letter-spacing:0px;font-family:'Liberation Sans',sans-serif;">Domains on Lists</div>
<div class="t" style="left:717.50px;top:325.97px;font-size:35px;color:#fff;font-weight:bold;letter-spacing:1.1px;font-family:'Liberation Sans',sans-serif;">8,546,786</div>
<div class="t" style="right:66.00px;top:380.70px;font-size:13px;color:rgba(255,255,255,0.82);font-weight:normal;letter-spacing:-0.15px;font-family:'Liberation Sans',sans-serif;text-align:right;">Manage lists</div>
<svg class="a" style="left:1111.5px;top:381px" width="13" height="13" viewBox="0 0 13 13"><circle cx="6.5" cy="6.5" r="6.5" fill="rgba(255,255,255,0.82)"/><path d="M3 6.5 H9.5 M6.5 3.5 L9.5 6.5 L6.5 9.5" fill="none" stroke="#4e9058" stroke-width="1.6"/></svg>
<div class="a" style="left:246px;top:421px;width:891px;height:243px;background:#fff;border-top:3px solid #d2d6de;border-radius:5px;box-shadow:0 1px 1px rgba(0,0,0,0.1)"></div>
<div class="a" style="left:246px;top:463.6px;width:891px;height:1px;background:#f4f4f4;"></div>
<div class="t" style="left:256.50px;top:432.76px;font-size:18px;color:#444;font-weight:normal;letter-spacing:-0.55px;font-family:'Liberation Sans',sans-serif;">Total queries over last 24 hours</div>
<svg class="a" style="left:1113px;top:435.8px" width="14" height="14" viewBox="0 0 14 14"><circle cx="7" cy="7" r="6.8" fill="#444"/><circle cx="7" cy="4" r="1" fill="#fff"/><rect x="6.1" y="5.8" width="1.8" height="4.8" fill="#fff"/><rect x="5.3" y="9.6" width="3.4" height="1" fill="#fff"/><rect x="5.3" y="5.8" width="2" height="1" fill="#fff"/></svg>
<svg class="a" style="left:0;top:0" width="1170" height="951" viewBox="0 0 1170 951"><path d="M292 484.50 H1127" stroke="#dedede" stroke-width="1"/><path d="M292 505.50 H1127" stroke="#dedede" stroke-width="1"/><path d="M292 526.50 H1127" stroke="#dedede" stroke-width="1"/><path d="M292 547.50 H1127" stroke="#dedede" stroke-width="1"/><path d="M292 568.50 H1127" stroke="#dedede" stroke-width="1"/><path d="M292 590.50 H1127" stroke="#dedede" stroke-width="1"/><path d="M292 611.50 H1127" stroke="#dedede" stroke-width="1"/><path d="M308.50 484 V618.70" stroke="#dedede" stroke-width="1"/><path d="M342.50 484 V618.70" stroke="#dedede" stroke-width="1"/><path d="M377.50 484 V618.70" stroke="#dedede" stroke-width="1"/><path d="M411.50 484 V618.70" stroke="#dedede" stroke-width="1"/><path d="M446.50 484 V618.70" stroke="#dedede" stroke-width="1"/><path d="M480.50 484 V618.70" stroke="#dedede" stroke-width="1"/><path d="M515.50 484 V618.70" stroke="#dedede" stroke-width="1"/><path d="M549.50 484 V618.70" stroke="#dedede" stroke-width="1"/><path d="M584.50 484 V618.70" stroke="#dedede" stroke-width="1"/><path d="M618.50 484 V618.70" stroke="#dedede" stroke-width="1"/><path d="M653.50 484 V618.70" stroke="#dedede" stroke-width="1"/><path d="M687.50 484 V618.70" stroke="#dedede" stroke-width="1"/><path d="M722.50 484 V618.70" stroke="#dedede" stroke-width="1"/><path d="M756.50 484 V618.70" stroke="#dedede" stroke-width="1"/><path d="M790.50 484 V618.70" stroke="#dedede" stroke-width="1"/><path d="M825.50 484 V618.70" stroke="#dedede" stroke-width="1"/><path d="M859.50 484 V618.70" stroke="#dedede" stroke-width="1"/><path d="M894.50 484 V618.70" stroke="#dedede" stroke-width="1"/><path d="M928.50 484 V618.70" stroke="#dedede" stroke-width="1"/><path d="M963.50 484 V618.70" stroke="#dedede" stroke-width="1"/><path d="M997.50 484 V618.70" stroke="#dedede" stroke-width="1"/><path d="M1032.50 484 V618.70" stroke="#dedede" stroke-width="1"/><path d="M1066.50 484 V618.70" stroke="#dedede" stroke-width="1"/><path d="M1101.50 484 V618.70" stroke="#dedede" stroke-width="1"/><text x="289" y="488.30" text-anchor="end" font-size="12" fill="#262626" font-family="Liberation Sans">3,000</text><text x="289" y="509.42" text-anchor="end" font-size="12" fill="#262626" font-family="Liberation Sans">2,500</text><text x="289" y="530.53" text-anchor="end" font-size="12" fill="#262626" font-family="Liberation Sans">2,000</text><text x="289" y="551.65" text-anchor="end" font-size="12" fill="#262626" font-family="Liberation Sans">1,500</text><text x="289" y="572.77" text-anchor="end" font-size="12" fill="#262626" font-family="Liberation Sans">1,000</text><text x="289" y="593.88" text-anchor="end" font-size="12" fill="#262626" font-family="Liberation Sans">500</text><text x="289" y="615.00" text-anchor="end" font-size="12" fill="#262626" font-family="Liberation Sans">0</text><text transform="translate(309.90 629.50) rotate(-38)" text-anchor="end" font-size="12" fill="#262626" font-family="Liberation Sans">13:00</text><text transform="translate(344.37 629.50) rotate(-38)" text-anchor="end" font-size="12" fill="#262626" font-family="Liberation Sans">14:00</text><text transform="translate(378.84 629.50) rotate(-38)" text-anchor="end" font-size="12" fill="#262626" font-family="Liberation Sans">15:00</text><text transform="translate(413.31 629.50) rotate(-38)" text-anchor="end" font-size="12" fill="#262626" font-family="Liberation Sans">16:00</text><text transform="translate(447.78 629.50) rotate(-38)" text-anchor="end" font-size="12" fill="#262626" font-family="Liberation Sans">17:00</text><text transform="translate(482.25 629.50) rotate(-38)" text-anchor="end" font-size="12" fill="#262626" font-family="Liberation Sans">18:00</text><text transform="translate(516.72 629.50) rotate(-38)" text-anchor="end" font-size="12" fill="#262626" font-family="Liberation Sans">19:00</text><text transform="translate(551.19 629.50) rotate(-38)" text-anchor="end" font-size="12" fill="#262626" font-family="Liberation Sans">20:00</text><text transform="translate(585.66 629.50) rotate(-38)" text-anchor="end" font-size="12" fill="#262626" font-family="Liberation Sans">21:00</text><text transform="translate(620.13 629.50) rotate(-38)" text-anchor="end" font-size="12" fill="#262626" font-family="Liberation Sans">22:00</text><text transform="translate(654.60 629.50) rotate(-38)" text-anchor="end" font-size="12" fill="#262626" font-family="Liberation Sans">23:00</text><text transform="translate(689.07 629.50) rotate(-38)" text-anchor="end" font-size="12" fill="#262626" font-family="Liberation Sans">00:00</text><text transform="translate(723.54 629.50) rotate(-38)" text-anchor="end" font-size="12" fill="#262626" font-family="Liberation Sans">01:00</text><text transform="translate(758.01 629.50) rotate(-38)" text-anchor="end" font-size="12" fill="#262626" font-family="Liberation Sans">02:00</text><text transform="translate(792.48 629.50) rotate(-38)" text-anchor="end" font-size="12" fill="#262626" font-family="Liberation Sans">03:00</text><text transform="translate(826.95 629.50) rotate(-38)" text-anchor="end" font-size="12" fill="#262626" font-family="Liberation Sans">04:00</text><text transform="translate(861.42 629.50) rotate(-38)" text-anchor="end" font-size="12" fill="#262626" font-family="Liberation Sans">05:00</text><text transform="translate(895.89 629.50) rotate(-38)" text-anchor="end" font-size="12" fill="#262626" font-family="Liberation Sans">06:00</text><text transform="translate(930.36 629.50) rotate(-38)" text-anchor="end" font-size="12" fill="#262626" font-family="Liberation Sans">07:00</text><text transform="translate(964.83 629.50) rotate(-38)" text-anchor="end" font-size="12" fill="#262626" font-family="Liberation Sans">08:00</text><text transform="translate(999.30 629.50) rotate(-38)" text-anchor="end" font-size="12" fill="#262626" font-family="Liberation Sans">09:00</text><text transform="translate(1033.77 629.50) rotate(-38)" text-anchor="end" font-size="12" fill="#262626" font-family="Liberation Sans">10:00</text><text transform="translate(1068.24 629.50) rotate(-38)" text-anchor="end" font-size="12" fill="#262626" font-family="Liberation Sans">11:00</text><text transform="translate(1102.71 629.50) rotate(-38)" text-anchor="end" font-size="12" fill="#262626" font-family="Liberation Sans">12:00</text><svg x="0" y="0" width="1127" height="951"><rect x="642.20" y="610.00" width="4.6" height="1.00" fill="#a3bbe8"/><rect x="642.20" y="609.00" width="4.6" height="1.00" fill="#4e9a5a"/><rect x="647.95" y="604.80" width="4.6" height="6.20" fill="#999999"/><rect x="647.95" y="596.50" width="4.6" height="8.30" fill="#a3bbe8"/><rect x="647.95" y="590.00" width="4.6" height="6.50" fill="#4e9a5a"/><rect x="653.69" y="604.00" width="4.6" height="7.00" fill="#999999"/><rect x="653.69" y="598.70" width="4.6" height="5.30" fill="#a3bbe8"/><rect x="653.69" y="596.00" width="4.6" height="2.70" fill="#4e9a5a"/><rect x="659.44" y="605.50" width="4.6" height="5.50" fill="#999999"/><rect x="659.44" y="601.50" width="4.6" height="4.00" fill="#a3bbe8"/><rect x="659.44" y="599.30" width="4.6" height="2.20" fill="#4e9a5a"/><rect x="665.18" y="605.00" width="4.6" height="6.00" fill="#999999"/><rect x="665.18" y="602.20" width="4.6" height="2.80" fill="#a3bbe8"/><rect x="665.18" y="598.20" width="4.6" height="4.00" fill="#4e9a5a"/><rect x="670.93" y="605.00" width="4.6" height="6.00" fill="#999999"/><rect x="670.93" y="601.20" width="4.6" height="3.80" fill="#a3bbe8"/><rect x="670.93" y="598.00" width="4.6" height="3.20" fill="#4e9a5a"/><rect x="676.67" y="595.00" width="4.6" height="16.00" fill="#999999"/><rect x="676.67" y="576.30" width="4.6" height="18.70" fill="#a3bbe8"/><rect x="676.67" y="564.00" width="4.6" height="12.30" fill="#4e9a5a"/><rect x="682.42" y="585.20" width="4.6" height="25.80" fill="#999999"/><rect x="682.42" y="545.00" width="4.6" height="40.20" fill="#a3bbe8"/><rect x="682.42" y="530.80" width="4.6" height="14.20" fill="#4e9a5a"/><rect x="688.16" y="583.00" width="4.6" height="28.00" fill="#999999"/><rect x="688.16" y="539.80" width="4.6" height="43.20" fill="#a3bbe8"/><rect x="688.16" y="530.30" width="4.6" height="9.50" fill="#4e9a5a"/><rect x="693.91" y="582.20" width="4.6" height="28.80" fill="#999999"/><rect x="693.91" y="541.00" width="4.6" height="41.20" fill="#a3bbe8"/><rect x="693.91" y="531.70" width="4.6" height="9.30" fill="#4e9a5a"/><rect x="699.65" y="581.00" width="4.6" height="30.00" fill="#999999"/><rect x="699.65" y="557.00" width="4.6" height="24.00" fill="#a3bbe8"/><rect x="699.65" y="550.20" width="4.6" height="6.80" fill="#4e9a5a"/><rect x="705.40" y="581.00" width="4.6" height="30.00" fill="#999999"/><rect x="705.40" y="554.20" width="4.6" height="26.80" fill="#a3bbe8"/><rect x="705.40" y="547.20" width="4.6" height="7.00" fill="#4e9a5a"/><rect x="711.14" y="591.20" width="4.6" height="19.80" fill="#999999"/><rect x="711.14" y="573.00" width="4.6" height="18.20" fill="#a3bbe8"/><rect x="711.14" y="568.20" width="4.6" height="4.80" fill="#4e9a5a"/><rect x="716.88" y="591.00" width="4.6" height="20.00" fill="#999999"/><rect x="716.88" y="573.00" width="4.6" height="18.00" fill="#a3bbe8"/><rect x="716.88" y="569.00" width="4.6" height="4.00" fill="#4e9a5a"/><rect x="722.63" y="589.50" width="4.6" height="21.50" fill="#999999"/><rect x="722.63" y="567.50" width="4.6" height="22.00" fill="#a3bbe8"/><rect x="722.63" y="561.00" width="4.6" height="6.50" fill="#4e9a5a"/><rect x="728.38" y="591.80" width="4.6" height="19.20" fill="#999999"/><rect x="728.38" y="561.30" width="4.6" height="30.50" fill="#a3bbe8"/><rect x="728.38" y="555.80" width="4.6" height="5.50" fill="#4e9a5a"/><rect x="734.12" y="593.60" width="4.6" height="17.40" fill="#999999"/><rect x="734.12" y="576.20" width="4.6" height="17.40" fill="#a3bbe8"/><rect x="734.12" y="573.30" width="4.6" height="2.90" fill="#4e9a5a"/><rect x="739.87" y="591.50" width="4.6" height="19.50" fill="#999999"/><rect x="739.87" y="565.20" width="4.6" height="26.30" fill="#a3bbe8"/><rect x="739.87" y="560.20" width="4.6" height="5.00" fill="#4e9a5a"/><rect x="745.61" y="590.80" width="4.6" height="20.20" fill="#999999"/><rect x="745.61" y="573.30" width="4.6" height="17.50" fill="#a3bbe8"/><rect x="745.61" y="570.30" width="4.6" height="3.00" fill="#4e9a5a"/><rect x="751.36" y="591.30" width="4.6" height="19.70" fill="#999999"/><rect x="751.36" y="574.80" width="4.6" height="16.50" fill="#a3bbe8"/><rect x="751.36" y="572.20" width="4.6" height="2.60" fill="#4e9a5a"/><rect x="757.10" y="590.00" width="4.6" height="21.00" fill="#999999"/><rect x="757.10" y="563.20" width="4.6" height="26.80" fill="#a3bbe8"/><rect x="757.10" y="558.30" width="4.6" height="4.90" fill="#4e9a5a"/><rect x="762.85" y="592.00" width="4.6" height="19.00" fill="#999999"/><rect x="762.85" y="565.20" width="4.6" height="26.80" fill="#a3bbe8"/><rect x="762.85" y="563.00" width="4.6" height="2.20" fill="#4e9a5a"/><rect x="768.59" y="592.00" width="4.6" height="19.00" fill="#999999"/><rect x="768.59" y="575.50" width="4.6" height="16.50" fill="#a3bbe8"/><rect x="768.59" y="573.20" width="4.6" height="2.30" fill="#4e9a5a"/><rect x="774.34" y="591.00" width="4.6" height="20.00" fill="#999999"/><rect x="774.34" y="571.50" width="4.6" height="19.50" fill="#a3bbe8"/><rect x="774.34" y="563.50" width="4.6" height="8.00" fill="#4e9a5a"/><rect x="780.08" y="590.80" width="4.6" height="20.20" fill="#999999"/><rect x="780.08" y="571.80" width="4.6" height="19.00" fill="#a3bbe8"/><rect x="780.08" y="567.30" width="4.6" height="4.50" fill="#4e9a5a"/><rect x="785.83" y="588.20" width="4.6" height="22.80" fill="#999999"/><rect x="785.83" y="558.80" width="4.6" height="29.40" fill="#a3bbe8"/><rect x="785.83" y="551.30" width="4.6" height="7.50" fill="#4e9a5a"/><rect x="791.57" y="589.20" width="4.6" height="21.80" fill="#999999"/><rect x="791.57" y="568.20" width="4.6" height="21.00" fill="#a3bbe8"/><rect x="791.57" y="564.00" width="4.6" height="4.20" fill="#4e9a5a"/><rect x="797.32" y="592.70" width="4.6" height="18.30" fill="#999999"/><rect x="797.32" y="565.00" width="4.6" height="27.70" fill="#a3bbe8"/><rect x="797.32" y="561.80" width="4.6" height="3.20" fill="#4e9a5a"/><rect x="803.06" y="592.00" width="4.6" height="19.00" fill="#999999"/><rect x="803.06" y="574.50" width="4.6" height="17.50" fill="#a3bbe8"/><rect x="803.06" y="571.30" width="4.6" height="3.20" fill="#4e9a5a"/><rect x="808.81" y="593.00" width="4.6" height="18.00" fill="#999999"/><rect x="808.81" y="575.80" width="4.6" height="17.20" fill="#a3bbe8"/><rect x="808.81" y="572.00" width="4.6" height="3.80" fill="#4e9a5a"/><rect x="814.55" y="593.00" width="4.6" height="18.00" fill="#999999"/><rect x="814.55" y="578.50" width="4.6" height="14.50" fill="#a3bbe8"/><rect x="814.55" y="576.00" width="4.6" height="2.50" fill="#4e9a5a"/><rect x="820.30" y="589.50" width="4.6" height="21.50" fill="#999999"/><rect x="820.30" y="568.20" width="4.6" height="21.30" fill="#a3bbe8"/><rect x="820.30" y="564.50" width="4.6" height="3.70" fill="#4e9a5a"/><rect x="826.04" y="591.00" width="4.6" height="20.00" fill="#999999"/><rect x="826.04" y="572.30" width="4.6" height="18.70" fill="#a3bbe8"/><rect x="826.04" y="568.10" width="4.6" height="4.20" fill="#4e9a5a"/><rect x="831.79" y="593.00" width="4.6" height="18.00" fill="#999999"/><rect x="831.79" y="567.20" width="4.6" height="25.80" fill="#a3bbe8"/><rect x="831.79" y="564.00" width="4.6" height="3.20" fill="#4e9a5a"/><rect x="837.53" y="591.20" width="4.6" height="19.80" fill="#999999"/><rect x="837.53" y="573.00" width="4.6" height="18.20" fill="#a3bbe8"/><rect x="837.53" y="570.30" width="4.6" height="2.70" fill="#4e9a5a"/><rect x="843.28" y="592.00" width="4.6" height="19.00" fill="#999999"/><rect x="843.28" y="573.50" width="4.6" height="18.50" fill="#a3bbe8"/><rect x="843.28" y="570.20" width="4.6" height="3.30" fill="#4e9a5a"/><rect x="849.02" y="593.20" width="4.6" height="17.80" fill="#999999"/><rect x="849.02" y="579.00" width="4.6" height="14.20" fill="#a3bbe8"/><rect x="849.02" y="576.70" width="4.6" height="2.30" fill="#4e9a5a"/><rect x="854.77" y="591.80" width="4.6" height="19.20" fill="#999999"/><rect x="854.77" y="574.00" width="4.6" height="17.80" fill="#a3bbe8"/><rect x="854.77" y="570.80" width="4.6" height="3.20" fill="#4e9a5a"/><rect x="860.51" y="591.80" width="4.6" height="19.20" fill="#999999"/><rect x="860.51" y="572.00" width="4.6" height="19.80" fill="#a3bbe8"/><rect x="860.51" y="567.50" width="4.6" height="4.50" fill="#4e9a5a"/><rect x="866.26" y="593.20" width="4.6" height="17.80" fill="#999999"/><rect x="866.26" y="566.20" width="4.6" height="27.00" fill="#a3bbe8"/><rect x="866.26" y="562.80" width="4.6" height="3.40" fill="#4e9a5a"/><rect x="872.00" y="592.00" width="4.6" height="19.00" fill="#999999"/><rect x="872.00" y="574.20" width="4.6" height="17.80" fill="#a3bbe8"/><rect x="872.00" y="571.00" width="4.6" height="3.20" fill="#4e9a5a"/><rect x="877.75" y="592.00" width="4.6" height="19.00" fill="#999999"/><rect x="877.75" y="576.60" width="4.6" height="15.40" fill="#a3bbe8"/><rect x="877.75" y="574.00" width="4.6" height="2.60" fill="#4e9a5a"/><rect x="883.49" y="591.80" width="4.6" height="19.20" fill="#999999"/><rect x="883.49" y="577.40" width="4.6" height="14.40" fill="#a3bbe8"/><rect x="883.49" y="575.00" width="4.6" height="2.40" fill="#4e9a5a"/><rect x="889.24" y="590.40" width="4.6" height="20.60" fill="#999999"/><rect x="889.24" y="567.00" width="4.6" height="23.40" fill="#a3bbe8"/><rect x="889.24" y="561.20" width="4.6" height="5.80" fill="#4e9a5a"/><rect x="894.98" y="590.00" width="4.6" height="21.00" fill="#999999"/><rect x="894.98" y="568.50" width="4.6" height="21.50" fill="#a3bbe8"/><rect x="894.98" y="563.30" width="4.6" height="5.20" fill="#4e9a5a"/><rect x="900.73" y="591.40" width="4.6" height="19.60" fill="#999999"/><rect x="900.73" y="564.00" width="4.6" height="27.40" fill="#a3bbe8"/><rect x="900.73" y="560.80" width="4.6" height="3.20" fill="#4e9a5a"/><rect x="906.47" y="592.60" width="4.6" height="18.40" fill="#999999"/><rect x="906.47" y="576.10" width="4.6" height="16.50" fill="#a3bbe8"/><rect x="906.47" y="573.10" width="4.6" height="3.00" fill="#4e9a5a"/><rect x="912.22" y="593.00" width="4.6" height="18.00" fill="#999999"/><rect x="912.22" y="577.60" width="4.6" height="15.40" fill="#a3bbe8"/><rect x="912.22" y="575.00" width="4.6" height="2.60" fill="#4e9a5a"/><rect x="917.96" y="591.00" width="4.6" height="20.00" fill="#999999"/><rect x="917.96" y="574.00" width="4.6" height="17.00" fill="#a3bbe8"/><rect x="917.96" y="570.20" width="4.6" height="3.80" fill="#4e9a5a"/><rect x="923.71" y="585.30" width="4.6" height="25.70" fill="#999999"/><rect x="923.71" y="562.30" width="4.6" height="23.00" fill="#a3bbe8"/><rect x="923.71" y="556.80" width="4.6" height="5.50" fill="#4e9a5a"/><rect x="929.45" y="589.40" width="4.6" height="21.60" fill="#999999"/><rect x="929.45" y="565.20" width="4.6" height="24.20" fill="#a3bbe8"/><rect x="929.45" y="559.10" width="4.6" height="6.10" fill="#4e9a5a"/><rect x="935.20" y="589.80" width="4.6" height="21.20" fill="#999999"/><rect x="935.20" y="531.40" width="4.6" height="58.40" fill="#a3bbe8"/><rect x="935.20" y="523.80" width="4.6" height="7.60" fill="#4e9a5a"/><rect x="940.94" y="591.20" width="4.6" height="19.80" fill="#999999"/><rect x="940.94" y="542.10" width="4.6" height="49.10" fill="#a3bbe8"/><rect x="940.94" y="539.00" width="4.6" height="3.10" fill="#4e9a5a"/><rect x="946.69" y="592.00" width="4.6" height="19.00" fill="#999999"/><rect x="946.69" y="549.60" width="4.6" height="42.40" fill="#a3bbe8"/><rect x="946.69" y="544.60" width="4.6" height="5.00" fill="#4e9a5a"/><rect x="952.43" y="589.40" width="4.6" height="21.60" fill="#999999"/><rect x="952.43" y="562.80" width="4.6" height="26.60" fill="#a3bbe8"/><rect x="952.43" y="557.00" width="4.6" height="5.80" fill="#4e9a5a"/><rect x="958.18" y="589.80" width="4.6" height="21.20" fill="#999999"/><rect x="958.18" y="537.10" width="4.6" height="52.70" fill="#a3bbe8"/><rect x="958.18" y="533.00" width="4.6" height="4.10" fill="#4e9a5a"/><rect x="963.92" y="590.80" width="4.6" height="20.20" fill="#999999"/><rect x="963.92" y="539.00" width="4.6" height="51.80" fill="#a3bbe8"/><rect x="963.92" y="534.40" width="4.6" height="4.60" fill="#4e9a5a"/><rect x="969.67" y="593.40" width="4.6" height="17.60" fill="#999999"/><rect x="969.67" y="549.90" width="4.6" height="43.50" fill="#a3bbe8"/><rect x="969.67" y="547.20" width="4.6" height="2.70" fill="#4e9a5a"/><rect x="975.41" y="591.10" width="4.6" height="19.90" fill="#999999"/><rect x="975.41" y="556.00" width="4.6" height="35.10" fill="#a3bbe8"/><rect x="975.41" y="551.00" width="4.6" height="5.00" fill="#4e9a5a"/><rect x="981.15" y="589.40" width="4.6" height="21.60" fill="#999999"/><rect x="981.15" y="539.00" width="4.6" height="50.40" fill="#a3bbe8"/><rect x="981.15" y="532.30" width="4.6" height="6.70" fill="#4e9a5a"/><rect x="986.90" y="592.90" width="4.6" height="18.10" fill="#999999"/><rect x="986.90" y="541.80" width="4.6" height="51.10" fill="#a3bbe8"/><rect x="986.90" y="537.50" width="4.6" height="4.30" fill="#4e9a5a"/><rect x="992.64" y="592.00" width="4.6" height="19.00" fill="#999999"/><rect x="992.64" y="566.90" width="4.6" height="25.10" fill="#a3bbe8"/><rect x="992.64" y="562.00" width="4.6" height="4.90" fill="#4e9a5a"/><rect x="998.39" y="590.50" width="4.6" height="20.50" fill="#999999"/><rect x="998.39" y="544.20" width="4.6" height="46.30" fill="#a3bbe8"/><rect x="998.39" y="539.70" width="4.6" height="4.50" fill="#4e9a5a"/><rect x="1004.13" y="586.20" width="4.6" height="24.80" fill="#999999"/><rect x="1004.13" y="525.20" width="4.6" height="61.00" fill="#a3bbe8"/><rect x="1004.13" y="518.00" width="4.6" height="7.20" fill="#4e9a5a"/><rect x="1009.88" y="585.10" width="4.6" height="25.90" fill="#999999"/><rect x="1009.88" y="535.70" width="4.6" height="49.40" fill="#a3bbe8"/><rect x="1009.88" y="529.00" width="4.6" height="6.70" fill="#4e9a5a"/><rect x="1015.62" y="589.80" width="4.6" height="21.20" fill="#999999"/><rect x="1015.62" y="560.10" width="4.6" height="29.70" fill="#a3bbe8"/><rect x="1015.62" y="555.80" width="4.6" height="4.30" fill="#4e9a5a"/><rect x="1021.37" y="594.30" width="4.6" height="16.70" fill="#999999"/><rect x="1021.37" y="572.20" width="4.6" height="22.10" fill="#a3bbe8"/><rect x="1021.37" y="568.20" width="4.6" height="4.00" fill="#4e9a5a"/><rect x="1027.12" y="584.00" width="4.6" height="27.00" fill="#999999"/><rect x="1027.12" y="550.70" width="4.6" height="33.30" fill="#a3bbe8"/><rect x="1027.12" y="542.70" width="4.6" height="8.00" fill="#4e9a5a"/><rect x="1032.86" y="583.60" width="4.6" height="27.40" fill="#999999"/><rect x="1032.86" y="553.50" width="4.6" height="30.10" fill="#a3bbe8"/><rect x="1032.86" y="546.00" width="4.6" height="7.50" fill="#4e9a5a"/><rect x="1038.61" y="584.80" width="4.6" height="26.20" fill="#999999"/><rect x="1038.61" y="547.70" width="4.6" height="37.10" fill="#a3bbe8"/><rect x="1038.61" y="542.00" width="4.6" height="5.70" fill="#4e9a5a"/><rect x="1044.35" y="589.70" width="4.6" height="21.30" fill="#999999"/><rect x="1044.35" y="566.20" width="4.6" height="23.50" fill="#a3bbe8"/><rect x="1044.35" y="562.00" width="4.6" height="4.20" fill="#4e9a5a"/><rect x="1050.10" y="589.70" width="4.6" height="21.30" fill="#999999"/><rect x="1050.10" y="567.00" width="4.6" height="22.70" fill="#a3bbe8"/><rect x="1050.10" y="564.00" width="4.6" height="3.00" fill="#4e9a5a"/><rect x="1055.84" y="590.70" width="4.6" height="20.30" fill="#999999"/><rect x="1055.84" y="570.40" width="4.6" height="20.30" fill="#a3bbe8"/><rect x="1055.84" y="565.90" width="4.6" height="4.50" fill="#4e9a5a"/><rect x="1061.59" y="573.70" width="4.6" height="37.30" fill="#999999"/><rect x="1061.59" y="536.00" width="4.6" height="37.70" fill="#a3bbe8"/><rect x="1061.59" y="520.50" width="4.6" height="15.50" fill="#4e9a5a"/><rect x="1067.33" y="565.90" width="4.6" height="45.10" fill="#999999"/><rect x="1067.33" y="528.00" width="4.6" height="37.90" fill="#a3bbe8"/><rect x="1067.33" y="517.60" width="4.6" height="10.40" fill="#4e9a5a"/><rect x="1073.08" y="572.30" width="4.6" height="38.70" fill="#999999"/><rect x="1073.08" y="526.40" width="4.6" height="45.90" fill="#a3bbe8"/><rect x="1073.08" y="518.00" width="4.6" height="8.40" fill="#4e9a5a"/><rect x="1078.82" y="571.30" width="4.6" height="39.70" fill="#999999"/><rect x="1078.82" y="542.00" width="4.6" height="29.30" fill="#a3bbe8"/><rect x="1078.82" y="534.70" width="4.6" height="7.30" fill="#4e9a5a"/><rect x="1084.57" y="573.70" width="4.6" height="37.30" fill="#999999"/><rect x="1084.57" y="515.20" width="4.6" height="58.50" fill="#a3bbe8"/><rect x="1084.57" y="508.00" width="4.6" height="7.20" fill="#4e9a5a"/><rect x="1090.31" y="570.10" width="4.6" height="40.90" fill="#999999"/><rect x="1090.31" y="507.00" width="4.6" height="63.10" fill="#a3bbe8"/><rect x="1090.31" y="498.20" width="4.6" height="8.80" fill="#4e9a5a"/><rect x="1096.06" y="563.70" width="4.6" height="47.30" fill="#999999"/><rect x="1096.06" y="518.30" width="4.6" height="45.40" fill="#a3bbe8"/><rect x="1096.06" y="508.80" width="4.6" height="9.50" fill="#4e9a5a"/><rect x="1101.80" y="574.40" width="4.6" height="36.60" fill="#999999"/><rect x="1101.80" y="512.00" width="4.6" height="62.40" fill="#a3bbe8"/><rect x="1101.80" y="505.60" width="4.6" height="6.40" fill="#4e9a5a"/><rect x="1107.55" y="577.20" width="4.6" height="33.80" fill="#999999"/><rect x="1107.55" y="510.10" width="4.6" height="67.10" fill="#a3bbe8"/><rect x="1107.55" y="504.80" width="4.6" height="5.30" fill="#4e9a5a"/><rect x="1113.29" y="571.60" width="4.6" height="39.40" fill="#999999"/><rect x="1113.29" y="512.40" width="4.6" height="59.20" fill="#a3bbe8"/><rect x="1113.29" y="502.00" width="4.6" height="10.40" fill="#4e9a5a"/><rect x="1119.04" y="577.40" width="4.6" height="33.60" fill="#999999"/><rect x="1119.04" y="540.80" width="4.6" height="36.60" fill="#a3bbe8"/><rect x="1119.04" y="534.00" width="4.6" height="6.80" fill="#4e9a5a"/><rect x="1124.78" y="591.40" width="4.6" height="19.60" fill="#999999"/><rect x="1124.78" y="544.20" width="4.6" height="47.20" fill="#a3bbe8"/><rect x="1124.78" y="540.00" width="4.6" height="4.20" fill="#4e9a5a"/></svg></svg>
<div class="a" style="left:246px;top:685px;width:891px;height:243px;background:#fff;border-top:3px solid #d2d6de;border-radius:5px;box-shadow:0 1px 1px rgba(0,0,0,0.1)"></div>
<div class="a" style="left:246px;top:727.6px;width:891px;height:1px;background:#f4f4f4;"></div>
<div class="t" style="left:256.50px;top:696.76px;font-size:18px;color:#444;font-weight:normal;letter-spacing:-0.55px;font-family:'Liberation Sans',sans-serif;">Client activity over last 24 hours</div>
<svg class="a" style="left:1113px;top:699.8px" width="14" height="14" viewBox="0 0 14 14"><circle cx="7" cy="7" r="6.8" fill="#444"/><circle cx="7" cy="4" r="1" fill="#fff"/><rect x="6.1" y="5.8" width="1.8" height="4.8" fill="#fff"/><rect x="5.3" y="9.6" width="3.4" height="1" fill="#fff"/><rect x="5.3" y="5.8" width="2" height="1" fill="#fff"/></svg>
<svg class="a" style="left:0;top:0" width="1170" height="951" viewBox="0 0 1170 951"><path d="M292 748.50 H1127" stroke="#dedede" stroke-width="1"/><path d="M292 769.50 H1127" stroke="#dedede" stroke-width="1"/><path d="M292 790.50 H1127" stroke="#dedede" stroke-width="1"/><path d="M292 811.50 H1127" stroke="#dedede" stroke-width="1"/><path d="M292 832.50 H1127" stroke="#dedede" stroke-width="1"/><path d="M292 853.50 H1127" stroke="#dedede" stroke-width="1"/><path d="M292 874.50 H1127" stroke="#dedede" stroke-width="1"/><path d="M308.50 747.6 V882.30" stroke="#dedede" stroke-width="1"/><path d="M342.50 747.6 V882.30" stroke="#dedede" stroke-width="1"/><path d="M377.50 747.6 V882.30" stroke="#dedede" stroke-width="1"/><path d="M411.50 747.6 V882.30" stroke="#dedede" stroke-width="1"/><path d="M446.50 747.6 V882.30" stroke="#dedede" stroke-width="1"/><path d="M480.50 747.6 V882.30" stroke="#dedede" stroke-width="1"/><path d="M515.50 747.6 V882.30" stroke="#dedede" stroke-width="1"/><path d="M549.50 747.6 V882.30" stroke="#dedede" stroke-width="1"/><path d="M584.50 747.6 V882.30" stroke="#dedede" stroke-width="1"/><path d="M618.50 747.6 V882.30" stroke="#dedede" stroke-width="1"/><path d="M653.50 747.6 V882.30" stroke="#dedede" stroke-width="1"/><path d="M687.50 747.6 V882.30" stroke="#dedede" stroke-width="1"/><path d="M722.50 747.6 V882.30" stroke="#dedede" stroke-width="1"/><path d="M756.50 747.6 V882.30" stroke="#dedede" stroke-width="1"/><path d="M790.50 747.6 V882.30" stroke="#dedede" stroke-width="1"/><path d="M825.50 747.6 V882.30" stroke="#dedede" stroke-width="1"/><path d="M859.50 747.6 V882.30" stroke="#dedede" stroke-width="1"/><path d="M894.50 747.6 V882.30" stroke="#dedede" stroke-width="1"/><path d="M928.50 747.6 V882.30" stroke="#dedede" stroke-width="1"/><path d="M963.50 747.6 V882.30" stroke="#dedede" stroke-width="1"/><path d="M997.50 747.6 V882.30" stroke="#dedede" stroke-width="1"/><path d="M1032.50 747.6 V882.30" stroke="#dedede" stroke-width="1"/><path d="M1066.50 747.6 V882.30" stroke="#dedede" stroke-width="1"/><path d="M1101.50 747.6 V882.30" stroke="#dedede" stroke-width="1"/><text x="289" y="751.90" text-anchor="end" font-size="12" fill="#262626" font-family="Liberation Sans">3,000</text><text x="289" y="773.02" text-anchor="end" font-size="12" fill="#262626" font-family="Liberation Sans">2,500</text><text x="289" y="794.13" text-anchor="end" font-size="12" fill="#262626" font-family="Liberation Sans">2,000</text><text x="289" y="815.25" text-anchor="end" font-size="12" fill="#262626" font-family="Liberation Sans">1,500</text><text x="289" y="836.37" text-anchor="end" font-size="12" fill="#262626" font-family="Liberation Sans">1,000</text><text x="289" y="857.48" text-anchor="end" font-size="12" fill="#262626" font-family="Liberation Sans">500</text><text x="289" y="878.60" text-anchor="end" font-size="12" fill="#262626" font-family="Liberation Sans">0</text><text transform="translate(309.90 893.10) rotate(-38)" text-anchor="end" font-size="12" fill="#262626" font-family="Liberation Sans">13:00</text><text transform="translate(344.37 893.10) rotate(-38)" text-anchor="end" font-size="12" fill="#262626" font-family="Liberation Sans">14:00</text><text transform="translate(378.84 893.10) rotate(-38)" text-anchor="end" font-size="12" fill="#262626" font-family="Liberation Sans">15:00</text><text transform="translate(413.31 893.10) rotate(-38)" text-anchor="end" font-size="12" fill="#262626" font-family="Liberation Sans">16:00</text><text transform="translate(447.78 893.10) rotate(-38)" text-anchor="end" font-size="12" fill="#262626" font-family="Liberation Sans">17:00</text><text transform="translate(482.25 893.10) rotate(-38)" text-anchor="end" font-size="12" fill="#262626" font-family="Liberation Sans">18:00</text><text transform="translate(516.72 893.10) rotate(-38)" text-anchor="end" font-size="12" fill="#262626" font-family="Liberation Sans">19:00</text><text transform="translate(551.19 893.10) rotate(-38)" text-anchor="end" font-size="12" fill="#262626" font-family="Liberation Sans">20:00</text><text transform="translate(585.66 893.10) rotate(-38)" text-anchor="end" font-size="12" fill="#262626" font-family="Liberation Sans">21:00</text><text transform="translate(620.13 893.10) rotate(-38)" text-anchor="end" font-size="12" fill="#262626" font-family="Liberation Sans">22:00</text><text transform="translate(654.60 893.10) rotate(-38)" text-anchor="end" font-size="12" fill="#262626" font-family="Liberation Sans">23:00</text><text transform="translate(689.07 893.10) rotate(-38)" text-anchor="end" font-size="12" fill="#262626" font-family="Liberation Sans">00:00</text><text transform="translate(723.54 893.10) rotate(-38)" text-anchor="end" font-size="12" fill="#262626" font-family="Liberation Sans">01:00</text><text transform="translate(758.01 893.10) rotate(-38)" text-anchor="end" font-size="12" fill="#262626" font-family="Liberation Sans">02:00</text><text transform="translate(792.48 893.10) rotate(-38)" text-anchor="end" font-size="12" fill="#262626" font-family="Liberation Sans">03:00</text><text transform="translate(826.95 893.10) rotate(-38)" text-anchor="end" font-size="12" fill="#262626" font-family="Liberation Sans">04:00</text><text transform="translate(861.42 893.10) rotate(-38)" text-anchor="end" font-size="12" fill="#262626" font-family="Liberation Sans">05:00</text><text transform="translate(895.89 893.10) rotate(-38)" text-anchor="end" font-size="12" fill="#262626" font-family="Liberation Sans">06:00</text><text transform="translate(930.36 893.10) rotate(-38)" text-anchor="end" font-size="12" fill="#262626" font-family="Liberation Sans">07:00</text><text transform="translate(964.83 893.10) rotate(-38)" text-anchor="end" font-size="12" fill="#262626" font-family="Liberation Sans">08:00</text><text transform="translate(999.30 893.10) rotate(-38)" text-anchor="end" font-size="12" fill="#262626" font-family="Liberation Sans">09:00</text><text transform="translate(1033.77 893.10) rotate(-38)" text-anchor="end" font-size="12" fill="#262626" font-family="Liberation Sans">10:00</text><text transform="translate(1068.24 893.10) rotate(-38)" text-anchor="end" font-size="12" fill="#262626" font-family="Liberation Sans">11:00</text><text transform="translate(1102.71 893.10) rotate(-38)" text-anchor="end" font-size="12" fill="#262626" font-family="Liberation Sans">12:00</text><svg x="0" y="0" width="1127" height="951"><rect x="642.20" y="872.50" width="4.6" height="2.50" fill="#80ea7c"/><rect x="647.95" y="867.10" width="4.6" height="7.90" fill="#e0735a"/><rect x="647.95" y="864.00" width="4.6" height="3.10" fill="#5f9270"/><rect x="647.95" y="853.90" width="4.6" height="10.10" fill="#80ea7c"/><rect x="653.69" y="866.60" width="4.6" height="8.40" fill="#e0735a"/><rect x="653.69" y="863.70" width="4.6" height="2.90" fill="#5f9270"/><rect x="653.69" y="860.00" width="4.6" height="3.70" fill="#80ea7c"/><rect x="659.44" y="868.90" width="4.6" height="6.10" fill="#e0735a"/><rect x="659.44" y="866.00" width="4.6" height="2.90" fill="#5f9270"/><rect x="659.44" y="863.00" width="4.6" height="3.00" fill="#80ea7c"/><rect x="665.18" y="868.90" width="4.6" height="6.10" fill="#e0735a"/><rect x="665.18" y="868.00" width="4.6" height="0.90" fill="#6cc5c9"/><rect x="665.18" y="867.10" width="4.6" height="0.90" fill="#5f9270"/><rect x="665.18" y="862.20" width="4.6" height="4.90" fill="#80ea7c"/><rect x="670.93" y="869.00" width="4.6" height="6.00" fill="#e0735a"/><rect x="670.93" y="866.90" width="4.6" height="2.10" fill="#6cb8ea"/><rect x="670.93" y="864.40" width="4.6" height="2.50" fill="#e0a03a"/><rect x="670.93" y="863.70" width="4.6" height="0.70" fill="#5f9270"/><rect x="670.93" y="862.00" width="4.6" height="1.70" fill="#80ea7c"/><rect x="676.67" y="857.80" width="4.6" height="17.20" fill="#e0735a"/><rect x="676.67" y="856.80" width="4.6" height="1.00" fill="#6cb8ea"/><rect x="676.67" y="842.70" width="4.6" height="14.10" fill="#e0a03a"/><rect x="676.67" y="841.20" width="4.6" height="1.50" fill="#6cc5c9"/><rect x="676.67" y="839.00" width="4.6" height="2.20" fill="#5f9270"/><rect x="676.67" y="827.80" width="4.6" height="11.20" fill="#80ea7c"/><rect x="682.42" y="842.70" width="4.6" height="32.30" fill="#e0735a"/><rect x="682.42" y="838.80" width="4.6" height="3.90" fill="#4e9a5a"/><rect x="682.42" y="823.10" width="4.6" height="15.70" fill="#e0a03a"/><rect x="682.42" y="819.70" width="4.6" height="3.40" fill="#3d74ba"/><rect x="682.42" y="816.10" width="4.6" height="3.60" fill="#0e1b3c"/><rect x="682.42" y="812.40" width="4.6" height="3.70" fill="#6cc5c9"/><rect x="682.42" y="808.20" width="4.6" height="4.20" fill="#5f9270"/><rect x="682.42" y="794.60" width="4.6" height="13.60" fill="#80ea7c"/><rect x="688.16" y="844.80" width="4.6" height="30.20" fill="#e0735a"/><rect x="688.16" y="842.20" width="4.6" height="2.60" fill="#4e9a5a"/><rect x="688.16" y="825.10" width="4.6" height="17.10" fill="#e0a03a"/><rect x="688.16" y="821.70" width="4.6" height="3.40" fill="#3d74ba"/><rect x="688.16" y="817.70" width="4.6" height="4.00" fill="#0e1b3c"/><rect x="688.16" y="813.80" width="4.6" height="3.90" fill="#6cc5c9"/><rect x="688.16" y="808.80" width="4.6" height="5.00" fill="#5f9270"/><rect x="688.16" y="794.30" width="4.6" height="14.50" fill="#80ea7c"/><rect x="693.91" y="844.80" width="4.6" height="30.20" fill="#e0735a"/><rect x="693.91" y="843.50" width="4.6" height="1.30" fill="#4e9a5a"/><rect x="693.91" y="840.20" width="4.6" height="3.30" fill="#6cb8ea"/><rect x="693.91" y="822.00" width="4.6" height="18.20" fill="#e0a03a"/><rect x="693.91" y="818.20" width="4.6" height="3.80" fill="#3d74ba"/><rect x="693.91" y="814.80" width="4.6" height="3.40" fill="#0e1b3c"/><rect x="693.91" y="810.90" width="4.6" height="3.90" fill="#6cc5c9"/><rect x="693.91" y="804.80" width="4.6" height="6.10" fill="#5f9270"/><rect x="693.91" y="795.50" width="4.6" height="9.30" fill="#80ea7c"/><rect x="699.65" y="857.00" width="4.6" height="18.00" fill="#e0735a"/><rect x="699.65" y="856.20" width="4.6" height="0.80" fill="#4e9a5a"/><rect x="699.65" y="850.00" width="4.6" height="6.20" fill="#6cb8ea"/><rect x="699.65" y="837.10" width="4.6" height="12.90" fill="#e0a03a"/><rect x="699.65" y="833.60" width="4.6" height="3.50" fill="#3d74ba"/><rect x="699.65" y="830.00" width="4.6" height="3.60" fill="#0e1b3c"/><rect x="699.65" y="825.90" width="4.6" height="4.10" fill="#6cc5c9"/><rect x="699.65" y="823.10" width="4.6" height="2.80" fill="#5f9270"/><rect x="699.65" y="814.10" width="4.6" height="9.00" fill="#80ea7c"/><rect x="705.40" y="857.80" width="4.6" height="17.20" fill="#e0735a"/><rect x="705.40" y="856.70" width="4.6" height="1.10" fill="#4e9a5a"/><rect x="705.40" y="851.80" width="4.6" height="4.90" fill="#6cb8ea"/><rect x="705.40" y="830.70" width="4.6" height="21.10" fill="#e0a03a"/><rect x="705.40" y="827.00" width="4.6" height="3.70" fill="#3d74ba"/><rect x="705.40" y="823.10" width="4.6" height="3.90" fill="#0e1b3c"/><rect x="705.40" y="819.20" width="4.6" height="3.90" fill="#6cc5c9"/><rect x="705.40" y="816.50" width="4.6" height="2.70" fill="#5f9270"/><rect x="705.40" y="811.20" width="4.6" height="5.30" fill="#80ea7c"/><rect x="711.14" y="864.00" width="4.6" height="11.00" fill="#e0735a"/><rect x="711.14" y="857.80" width="4.6" height="6.20" fill="#4e9a5a"/><rect x="711.14" y="853.00" width="4.6" height="4.80" fill="#6cb8ea"/><rect x="711.14" y="849.50" width="4.6" height="3.50" fill="#3d74ba"/><rect x="711.14" y="845.60" width="4.6" height="3.90" fill="#0e1b3c"/><rect x="711.14" y="841.70" width="4.6" height="3.90" fill="#6cc5c9"/><rect x="711.14" y="838.30" width="4.6" height="3.40" fill="#5f9270"/><rect x="711.14" y="832.10" width="4.6" height="6.20" fill="#80ea7c"/><rect x="716.88" y="862.90" width="4.6" height="12.10" fill="#e0735a"/><rect x="716.88" y="859.30" width="4.6" height="3.60" fill="#4e9a5a"/><rect x="716.88" y="854.70" width="4.6" height="4.60" fill="#6cb8ea"/><rect x="716.88" y="851.00" width="4.6" height="3.70" fill="#3d74ba"/><rect x="716.88" y="847.10" width="4.6" height="3.90" fill="#0e1b3c"/><rect x="716.88" y="843.20" width="4.6" height="3.90" fill="#6cc5c9"/><rect x="716.88" y="840.20" width="4.6" height="3.00" fill="#5f9270"/><rect x="716.88" y="832.90" width="4.6" height="7.30" fill="#80ea7c"/><rect x="722.63" y="863.00" width="4.6" height="12.00" fill="#e0735a"/><rect x="722.63" y="852.90" width="4.6" height="10.10" fill="#4e9a5a"/><rect x="722.63" y="847.10" width="4.6" height="5.80" fill="#6cb8ea"/><rect x="722.63" y="843.70" width="4.6" height="3.40" fill="#3d74ba"/><rect x="722.63" y="839.70" width="4.6" height="4.00" fill="#0e1b3c"/><rect x="722.63" y="835.80" width="4.6" height="3.90" fill="#6cc5c9"/><rect x="722.63" y="833.70" width="4.6" height="2.10" fill="#5f9270"/><rect x="722.63" y="824.90" width="4.6" height="8.80" fill="#80ea7c"/><rect x="728.38" y="854.10" width="4.6" height="20.90" fill="#e0735a"/><rect x="728.38" y="845.10" width="4.6" height="9.00" fill="#4e9a5a"/><rect x="728.38" y="839.70" width="4.6" height="5.40" fill="#6cb8ea"/><rect x="728.38" y="836.30" width="4.6" height="3.40" fill="#3d74ba"/><rect x="728.38" y="832.70" width="4.6" height="3.60" fill="#0e1b3c"/><rect x="728.38" y="828.80" width="4.6" height="3.90" fill="#6cc5c9"/><rect x="728.38" y="824.10" width="4.6" height="4.70" fill="#5f9270"/><rect x="728.38" y="819.70" width="4.6" height="4.40" fill="#80ea7c"/><rect x="734.12" y="864.70" width="4.6" height="10.30" fill="#e0735a"/><rect x="734.12" y="862.20" width="4.6" height="2.50" fill="#4e9a5a"/><rect x="734.12" y="857.80" width="4.6" height="4.40" fill="#6cb8ea"/><rect x="734.12" y="854.40" width="4.6" height="3.40" fill="#3d74ba"/><rect x="734.12" y="850.50" width="4.6" height="3.90" fill="#0e1b3c"/><rect x="734.12" y="846.60" width="4.6" height="3.90" fill="#6cc5c9"/><rect x="734.12" y="843.20" width="4.6" height="3.40" fill="#5f9270"/><rect x="734.12" y="837.30" width="4.6" height="5.90" fill="#80ea7c"/><rect x="739.87" y="864.00" width="4.6" height="11.00" fill="#e0735a"/><rect x="739.87" y="852.90" width="4.6" height="11.10" fill="#4e9a5a"/><rect x="739.87" y="847.60" width="4.6" height="5.30" fill="#6cb8ea"/><rect x="739.87" y="843.70" width="4.6" height="3.90" fill="#3d74ba"/><rect x="739.87" y="840.20" width="4.6" height="3.50" fill="#0e1b3c"/><rect x="739.87" y="836.00" width="4.6" height="4.20" fill="#6cc5c9"/><rect x="739.87" y="832.90" width="4.6" height="3.10" fill="#5f9270"/><rect x="739.87" y="824.10" width="4.6" height="8.80" fill="#80ea7c"/><rect x="745.61" y="864.20" width="4.6" height="10.80" fill="#e0735a"/><rect x="745.61" y="860.30" width="4.6" height="3.90" fill="#4e9a5a"/><rect x="745.61" y="853.90" width="4.6" height="6.40" fill="#6cb8ea"/><rect x="745.61" y="850.00" width="4.6" height="3.90" fill="#3d74ba"/><rect x="745.61" y="846.60" width="4.6" height="3.40" fill="#0e1b3c"/><rect x="745.61" y="842.70" width="4.6" height="3.90" fill="#6cc5c9"/><rect x="745.61" y="839.70" width="4.6" height="3.00" fill="#5f9270"/><rect x="745.61" y="834.10" width="4.6" height="5.60" fill="#80ea7c"/><rect x="751.36" y="863.00" width="4.6" height="12.00" fill="#e0735a"/><rect x="751.36" y="861.60" width="4.6" height="1.40" fill="#4e9a5a"/><rect x="751.36" y="856.00" width="4.6" height="5.60" fill="#6cb8ea"/><rect x="751.36" y="852.20" width="4.6" height="3.80" fill="#3d74ba"/><rect x="751.36" y="848.50" width="4.6" height="3.70" fill="#0e1b3c"/><rect x="751.36" y="844.80" width="4.6" height="3.70" fill="#6cc5c9"/><rect x="751.36" y="841.70" width="4.6" height="3.10" fill="#5f9270"/><rect x="751.36" y="835.90" width="4.6" height="5.80" fill="#80ea7c"/><rect x="757.10" y="863.00" width="4.6" height="12.00" fill="#e0735a"/><rect x="757.10" y="860.10" width="4.6" height="2.90" fill="#4e9a5a"/><rect x="757.10" y="853.90" width="4.6" height="6.20" fill="#6cb8ea"/><rect x="757.10" y="850.50" width="4.6" height="3.40" fill="#3d74ba"/><rect x="757.10" y="847.10" width="4.6" height="3.40" fill="#0e1b3c"/><rect x="757.10" y="843.20" width="4.6" height="3.90" fill="#6cc5c9"/><rect x="757.10" y="840.20" width="4.6" height="3.00" fill="#5f9270"/><rect x="757.10" y="822.10" width="4.6" height="18.10" fill="#80ea7c"/><rect x="762.85" y="853.70" width="4.6" height="21.30" fill="#e0735a"/><rect x="762.85" y="852.90" width="4.6" height="0.80" fill="#4e9a5a"/><rect x="762.85" y="846.60" width="4.6" height="6.30" fill="#6cb8ea"/><rect x="762.85" y="843.20" width="4.6" height="3.40" fill="#3d74ba"/><rect x="762.85" y="839.30" width="4.6" height="3.90" fill="#0e1b3c"/><rect x="762.85" y="835.60" width="4.6" height="3.70" fill="#6cc5c9"/><rect x="762.85" y="831.70" width="4.6" height="3.90" fill="#5f9270"/><rect x="762.85" y="827.00" width="4.6" height="4.70" fill="#80ea7c"/><rect x="768.59" y="864.20" width="4.6" height="10.80" fill="#e0735a"/><rect x="768.59" y="863.00" width="4.6" height="1.20" fill="#4e9a5a"/><rect x="768.59" y="856.80" width="4.6" height="6.20" fill="#6cb8ea"/><rect x="768.59" y="853.40" width="4.6" height="3.40" fill="#3d74ba"/><rect x="768.59" y="849.70" width="4.6" height="3.70" fill="#0e1b3c"/><rect x="768.59" y="845.80" width="4.6" height="3.90" fill="#6cc5c9"/><rect x="768.59" y="843.20" width="4.6" height="2.60" fill="#5f9270"/><rect x="768.59" y="837.10" width="4.6" height="6.10" fill="#80ea7c"/><rect x="774.34" y="864.00" width="4.6" height="11.00" fill="#e0735a"/><rect x="774.34" y="853.90" width="4.6" height="10.10" fill="#4e9a5a"/><rect x="774.34" y="847.60" width="4.6" height="6.30" fill="#6cb8ea"/><rect x="774.34" y="844.10" width="4.6" height="3.50" fill="#3d74ba"/><rect x="774.34" y="840.20" width="4.6" height="3.90" fill="#0e1b3c"/><rect x="774.34" y="836.60" width="4.6" height="3.60" fill="#6cc5c9"/><rect x="774.34" y="833.70" width="4.6" height="2.90" fill="#5f9270"/><rect x="774.34" y="827.50" width="4.6" height="6.20" fill="#80ea7c"/><rect x="780.08" y="863.70" width="4.6" height="11.30" fill="#e0735a"/><rect x="780.08" y="860.80" width="4.6" height="2.90" fill="#4e9a5a"/><rect x="780.08" y="855.70" width="4.6" height="5.10" fill="#6cb8ea"/><rect x="780.08" y="852.30" width="4.6" height="3.40" fill="#3d74ba"/><rect x="780.08" y="848.50" width="4.6" height="3.80" fill="#0e1b3c"/><rect x="780.08" y="844.60" width="4.6" height="3.90" fill="#6cc5c9"/><rect x="780.08" y="841.20" width="4.6" height="3.40" fill="#5f9270"/><rect x="780.08" y="831.40" width="4.6" height="9.80" fill="#80ea7c"/><rect x="785.83" y="861.70" width="4.6" height="13.30" fill="#e0735a"/><rect x="785.83" y="848.00" width="4.6" height="13.70" fill="#4e9a5a"/><rect x="785.83" y="843.70" width="4.6" height="4.30" fill="#6cb8ea"/><rect x="785.83" y="840.20" width="4.6" height="3.50" fill="#3d74ba"/><rect x="785.83" y="836.60" width="4.6" height="3.60" fill="#0e1b3c"/><rect x="785.83" y="832.90" width="4.6" height="3.70" fill="#6cc5c9"/><rect x="785.83" y="829.50" width="4.6" height="3.40" fill="#5f9270"/><rect x="785.83" y="815.30" width="4.6" height="14.20" fill="#80ea7c"/><rect x="791.57" y="863.20" width="4.6" height="11.80" fill="#e0735a"/><rect x="791.57" y="856.40" width="4.6" height="6.80" fill="#4e9a5a"/><rect x="791.57" y="850.30" width="4.6" height="6.10" fill="#6cb8ea"/><rect x="791.57" y="847.10" width="4.6" height="3.20" fill="#3d74ba"/><rect x="791.57" y="843.20" width="4.6" height="3.90" fill="#0e1b3c"/><rect x="791.57" y="839.30" width="4.6" height="3.90" fill="#6cc5c9"/><rect x="791.57" y="836.80" width="4.6" height="2.50" fill="#5f9270"/><rect x="791.57" y="827.80" width="4.6" height="9.00" fill="#80ea7c"/><rect x="797.32" y="852.90" width="4.6" height="22.10" fill="#e0735a"/><rect x="797.32" y="850.30" width="4.6" height="2.60" fill="#4e9a5a"/><rect x="797.32" y="846.10" width="4.6" height="4.20" fill="#6cb8ea"/><rect x="797.32" y="842.20" width="4.6" height="3.90" fill="#3d74ba"/><rect x="797.32" y="838.80" width="4.6" height="3.40" fill="#0e1b3c"/><rect x="797.32" y="834.90" width="4.6" height="3.90" fill="#6cc5c9"/><rect x="797.32" y="830.90" width="4.6" height="4.00" fill="#5f9270"/><rect x="797.32" y="825.60" width="4.6" height="5.30" fill="#80ea7c"/><rect x="803.06" y="863.70" width="4.6" height="11.30" fill="#e0735a"/><rect x="803.06" y="861.20" width="4.6" height="2.50" fill="#4e9a5a"/><rect x="803.06" y="855.40" width="4.6" height="5.80" fill="#6cb8ea"/><rect x="803.06" y="852.00" width="4.6" height="3.40" fill="#3d74ba"/><rect x="803.06" y="848.50" width="4.6" height="3.50" fill="#0e1b3c"/><rect x="803.06" y="844.60" width="4.6" height="3.90" fill="#6cc5c9"/><rect x="803.06" y="841.50" width="4.6" height="3.10" fill="#5f9270"/><rect x="803.06" y="835.30" width="4.6" height="6.20" fill="#80ea7c"/><rect x="808.81" y="864.00" width="4.6" height="11.00" fill="#e0735a"/><rect x="808.81" y="862.70" width="4.6" height="1.30" fill="#4e9a5a"/><rect x="808.81" y="857.30" width="4.6" height="5.40" fill="#6cb8ea"/><rect x="808.81" y="853.40" width="4.6" height="3.90" fill="#3d74ba"/><rect x="808.81" y="849.70" width="4.6" height="3.70" fill="#0e1b3c"/><rect x="808.81" y="846.10" width="4.6" height="3.60" fill="#6cc5c9"/><rect x="808.81" y="843.20" width="4.6" height="2.90" fill="#5f9270"/><rect x="808.81" y="835.80" width="4.6" height="7.40" fill="#80ea7c"/><rect x="814.55" y="864.00" width="4.6" height="11.00" fill="#e0735a"/><rect x="814.55" y="862.70" width="4.6" height="1.30" fill="#4e9a5a"/><rect x="814.55" y="857.10" width="4.6" height="5.60" fill="#6cb8ea"/><rect x="814.55" y="853.40" width="4.6" height="3.70" fill="#3d74ba"/><rect x="814.55" y="849.70" width="4.6" height="3.70" fill="#0e1b3c"/><rect x="814.55" y="846.10" width="4.6" height="3.60" fill="#6cc5c9"/><rect x="814.55" y="842.90" width="4.6" height="3.20" fill="#5f9270"/><rect x="814.55" y="839.90" width="4.6" height="3.00" fill="#80ea7c"/><rect x="820.30" y="863.70" width="4.6" height="11.30" fill="#e0735a"/><rect x="820.30" y="858.10" width="4.6" height="5.60" fill="#4e9a5a"/><rect x="820.30" y="852.00" width="4.6" height="6.10" fill="#6cb8ea"/><rect x="820.30" y="848.50" width="4.6" height="3.50" fill="#3d74ba"/><rect x="820.30" y="844.40" width="4.6" height="4.10" fill="#0e1b3c"/><rect x="820.30" y="840.70" width="4.6" height="3.70" fill="#6cc5c9"/><rect x="820.30" y="837.30" width="4.6" height="3.40" fill="#5f9270"/><rect x="820.30" y="828.50" width="4.6" height="8.80" fill="#80ea7c"/><rect x="826.04" y="862.90" width="4.6" height="12.10" fill="#e0735a"/><rect x="826.04" y="859.30" width="4.6" height="3.60" fill="#4e9a5a"/><rect x="826.04" y="853.40" width="4.6" height="5.90" fill="#6cb8ea"/><rect x="826.04" y="849.80" width="4.6" height="3.60" fill="#3d74ba"/><rect x="826.04" y="845.80" width="4.6" height="4.00" fill="#0e1b3c"/><rect x="826.04" y="842.20" width="4.6" height="3.60" fill="#6cc5c9"/><rect x="826.04" y="838.80" width="4.6" height="3.40" fill="#5f9270"/><rect x="826.04" y="832.10" width="4.6" height="6.70" fill="#80ea7c"/><rect x="831.79" y="854.90" width="4.6" height="20.10" fill="#e0735a"/><rect x="831.79" y="852.30" width="4.6" height="2.60" fill="#4e9a5a"/><rect x="831.79" y="847.60" width="4.6" height="4.70" fill="#6cb8ea"/><rect x="831.79" y="843.70" width="4.6" height="3.90" fill="#3d74ba"/><rect x="831.79" y="840.20" width="4.6" height="3.50" fill="#0e1b3c"/><rect x="831.79" y="836.30" width="4.6" height="3.90" fill="#6cc5c9"/><rect x="831.79" y="832.40" width="4.6" height="3.90" fill="#5f9270"/><rect x="831.79" y="828.00" width="4.6" height="4.40" fill="#80ea7c"/><rect x="837.53" y="863.70" width="4.6" height="11.30" fill="#e0735a"/><rect x="837.53" y="862.20" width="4.6" height="1.50" fill="#4e9a5a"/><rect x="837.53" y="855.40" width="4.6" height="6.80" fill="#6cb8ea"/><rect x="837.53" y="852.00" width="4.6" height="3.40" fill="#3d74ba"/><rect x="837.53" y="848.30" width="4.6" height="3.70" fill="#0e1b3c"/><rect x="837.53" y="844.40" width="4.6" height="3.90" fill="#6cc5c9"/><rect x="837.53" y="841.20" width="4.6" height="3.20" fill="#5f9270"/><rect x="837.53" y="834.20" width="4.6" height="7.00" fill="#80ea7c"/><rect x="843.28" y="864.00" width="4.6" height="11.00" fill="#e0735a"/><rect x="843.28" y="860.80" width="4.6" height="3.20" fill="#4e9a5a"/><rect x="843.28" y="855.20" width="4.6" height="5.60" fill="#6cb8ea"/><rect x="843.28" y="851.70" width="4.6" height="3.50" fill="#3d74ba"/><rect x="843.28" y="848.00" width="4.6" height="3.70" fill="#0e1b3c"/><rect x="843.28" y="844.10" width="4.6" height="3.90" fill="#6cc5c9"/><rect x="843.28" y="840.90" width="4.6" height="3.20" fill="#5f9270"/><rect x="843.28" y="833.90" width="4.6" height="7.00" fill="#80ea7c"/><rect x="849.02" y="865.20" width="4.6" height="9.80" fill="#e0735a"/><rect x="849.02" y="864.20" width="4.6" height="1.00" fill="#4e9a5a"/><rect x="849.02" y="858.80" width="4.6" height="5.40" fill="#6cb8ea"/><rect x="849.02" y="855.20" width="4.6" height="3.60" fill="#3d74ba"/><rect x="849.02" y="851.50" width="4.6" height="3.70" fill="#0e1b3c"/><rect x="849.02" y="847.80" width="4.6" height="3.70" fill="#6cc5c9"/><rect x="849.02" y="844.60" width="4.6" height="3.20" fill="#5f9270"/><rect x="849.02" y="840.70" width="4.6" height="3.90" fill="#80ea7c"/><rect x="854.77" y="862.70" width="4.6" height="12.30" fill="#e0735a"/><rect x="854.77" y="860.80" width="4.6" height="1.90" fill="#4e9a5a"/><rect x="854.77" y="855.20" width="4.6" height="5.60" fill="#6cb8ea"/><rect x="854.77" y="851.50" width="4.6" height="3.70" fill="#3d74ba"/><rect x="854.77" y="847.80" width="4.6" height="3.70" fill="#0e1b3c"/><rect x="854.77" y="844.10" width="4.6" height="3.70" fill="#6cc5c9"/><rect x="854.77" y="840.90" width="4.6" height="3.20" fill="#5f9270"/><rect x="854.77" y="834.90" width="4.6" height="6.00" fill="#80ea7c"/><rect x="860.51" y="864.20" width="4.6" height="10.80" fill="#e0735a"/><rect x="860.51" y="859.80" width="4.6" height="4.40" fill="#4e9a5a"/><rect x="860.51" y="854.90" width="4.6" height="4.90" fill="#6cb8ea"/><rect x="860.51" y="851.50" width="4.6" height="3.40" fill="#3d74ba"/><rect x="860.51" y="847.80" width="4.6" height="3.70" fill="#0e1b3c"/><rect x="860.51" y="843.70" width="4.6" height="4.10" fill="#6cc5c9"/><rect x="860.51" y="840.70" width="4.6" height="3.00" fill="#5f9270"/><rect x="860.51" y="831.40" width="4.6" height="9.30" fill="#80ea7c"/><rect x="866.26" y="854.60" width="4.6" height="20.40" fill="#e0735a"/><rect x="866.26" y="852.40" width="4.6" height="2.20" fill="#4e9a5a"/><rect x="866.26" y="848.00" width="4.6" height="4.40" fill="#6cb8ea"/><rect x="866.26" y="844.40" width="4.6" height="3.60" fill="#3d74ba"/><rect x="866.26" y="840.70" width="4.6" height="3.70" fill="#0e1b3c"/><rect x="866.26" y="836.80" width="4.6" height="3.90" fill="#6cc5c9"/><rect x="866.26" y="832.90" width="4.6" height="3.90" fill="#5f9270"/><rect x="866.26" y="826.80" width="4.6" height="6.10" fill="#80ea7c"/><rect x="872.00" y="864.70" width="4.6" height="10.30" fill="#e0735a"/><rect x="872.00" y="861.70" width="4.6" height="3.00" fill="#4e9a5a"/><rect x="872.00" y="855.90" width="4.6" height="5.80" fill="#6cb8ea"/><rect x="872.00" y="852.40" width="4.6" height="3.50" fill="#3d74ba"/><rect x="872.00" y="848.70" width="4.6" height="3.70" fill="#0e1b3c"/><rect x="872.00" y="844.80" width="4.6" height="3.90" fill="#6cc5c9"/><rect x="872.00" y="841.50" width="4.6" height="3.30" fill="#5f9270"/><rect x="872.00" y="835.00" width="4.6" height="6.50" fill="#80ea7c"/><rect x="877.75" y="865.00" width="4.6" height="10.00" fill="#e0735a"/><rect x="877.75" y="863.20" width="4.6" height="1.80" fill="#4e9a5a"/><rect x="877.75" y="857.30" width="4.6" height="5.90" fill="#6cb8ea"/><rect x="877.75" y="853.90" width="4.6" height="3.40" fill="#3d74ba"/><rect x="877.75" y="850.30" width="4.6" height="3.60" fill="#0e1b3c"/><rect x="877.75" y="846.40" width="4.6" height="3.90" fill="#6cc5c9"/><rect x="877.75" y="843.50" width="4.6" height="2.90" fill="#5f9270"/><rect x="877.75" y="838.00" width="4.6" height="5.50" fill="#80ea7c"/><rect x="883.49" y="865.40" width="4.6" height="9.60" fill="#e0735a"/><rect x="883.49" y="863.40" width="4.6" height="2.00" fill="#4e9a5a"/><rect x="883.49" y="856.80" width="4.6" height="6.60" fill="#6cb8ea"/><rect x="883.49" y="853.40" width="4.6" height="3.40" fill="#3d74ba"/><rect x="883.49" y="849.70" width="4.6" height="3.70" fill="#0e1b3c"/><rect x="883.49" y="845.60" width="4.6" height="4.10" fill="#6cc5c9"/><rect x="883.49" y="842.20" width="4.6" height="3.40" fill="#5f9270"/><rect x="883.49" y="839.10" width="4.6" height="3.10" fill="#80ea7c"/><rect x="889.24" y="863.00" width="4.6" height="12.00" fill="#e0735a"/><rect x="889.24" y="859.30" width="4.6" height="3.70" fill="#4e9a5a"/><rect x="889.24" y="853.90" width="4.6" height="5.40" fill="#6cb8ea"/><rect x="889.24" y="850.30" width="4.6" height="3.60" fill="#3d74ba"/><rect x="889.24" y="846.80" width="4.6" height="3.50" fill="#0e1b3c"/><rect x="889.24" y="843.20" width="4.6" height="3.60" fill="#6cc5c9"/><rect x="889.24" y="840.20" width="4.6" height="3.00" fill="#5f9270"/><rect x="889.24" y="825.10" width="4.6" height="15.10" fill="#80ea7c"/><rect x="894.98" y="865.00" width="4.6" height="10.00" fill="#e0735a"/><rect x="894.98" y="861.40" width="4.6" height="3.60" fill="#4e9a5a"/><rect x="894.98" y="855.90" width="4.6" height="5.50" fill="#6cb8ea"/><rect x="894.98" y="852.40" width="4.6" height="3.50" fill="#3d74ba"/><rect x="894.98" y="848.70" width="4.6" height="3.70" fill="#0e1b3c"/><rect x="894.98" y="844.80" width="4.6" height="3.90" fill="#6cc5c9"/><rect x="894.98" y="841.90" width="4.6" height="2.90" fill="#5f9270"/><rect x="894.98" y="827.50" width="4.6" height="14.40" fill="#80ea7c"/><rect x="900.73" y="853.90" width="4.6" height="21.10" fill="#e0735a"/><rect x="900.73" y="851.00" width="4.6" height="2.90" fill="#4e9a5a"/><rect x="900.73" y="844.80" width="4.6" height="6.20" fill="#6cb8ea"/><rect x="900.73" y="841.20" width="4.6" height="3.60" fill="#3d74ba"/><rect x="900.73" y="837.60" width="4.6" height="3.60" fill="#0e1b3c"/><rect x="900.73" y="833.70" width="4.6" height="3.90" fill="#6cc5c9"/><rect x="900.73" y="830.00" width="4.6" height="3.70" fill="#5f9270"/><rect x="900.73" y="824.60" width="4.6" height="5.40" fill="#80ea7c"/><rect x="906.47" y="865.00" width="4.6" height="10.00" fill="#e0735a"/><rect x="906.47" y="863.20" width="4.6" height="1.80" fill="#4e9a5a"/><rect x="906.47" y="857.50" width="4.6" height="5.70" fill="#6cb8ea"/><rect x="906.47" y="853.90" width="4.6" height="3.60" fill="#3d74ba"/><rect x="906.47" y="850.30" width="4.6" height="3.60" fill="#0e1b3c"/><rect x="906.47" y="846.40" width="4.6" height="3.90" fill="#6cc5c9"/><rect x="906.47" y="843.20" width="4.6" height="3.20" fill="#5f9270"/><rect x="906.47" y="837.30" width="4.6" height="5.90" fill="#80ea7c"/><rect x="912.22" y="865.60" width="4.6" height="9.40" fill="#e0735a"/><rect x="912.22" y="864.00" width="4.6" height="1.60" fill="#4e9a5a"/><rect x="912.22" y="858.80" width="4.6" height="5.20" fill="#6cb8ea"/><rect x="912.22" y="855.40" width="4.6" height="3.40" fill="#3d74ba"/><rect x="912.22" y="852.00" width="4.6" height="3.40" fill="#0e1b3c"/><rect x="912.22" y="848.00" width="4.6" height="4.00" fill="#6cc5c9"/><rect x="912.22" y="844.80" width="4.6" height="3.20" fill="#5f9270"/><rect x="912.22" y="839.00" width="4.6" height="5.80" fill="#80ea7c"/><rect x="917.96" y="864.80" width="4.6" height="10.20" fill="#e0735a"/><rect x="917.96" y="863.10" width="4.6" height="1.70" fill="#4e9a5a"/><rect x="917.96" y="856.00" width="4.6" height="7.10" fill="#6cb8ea"/><rect x="917.96" y="852.60" width="4.6" height="3.40" fill="#3d74ba"/><rect x="917.96" y="848.90" width="4.6" height="3.70" fill="#0e1b3c"/><rect x="917.96" y="845.00" width="4.6" height="3.90" fill="#6cc5c9"/><rect x="917.96" y="842.00" width="4.6" height="3.00" fill="#5f9270"/><rect x="917.96" y="834.10" width="4.6" height="7.90" fill="#80ea7c"/><rect x="923.71" y="863.00" width="4.6" height="12.00" fill="#e0735a"/><rect x="923.71" y="850.90" width="4.6" height="12.10" fill="#4e9a5a"/><rect x="923.71" y="845.00" width="4.6" height="5.90" fill="#6cb8ea"/><rect x="923.71" y="841.00" width="4.6" height="4.00" fill="#3d74ba"/><rect x="923.71" y="837.60" width="4.6" height="3.40" fill="#0e1b3c"/><rect x="923.71" y="833.90" width="4.6" height="3.70" fill="#6cc5c9"/><rect x="923.71" y="830.80" width="4.6" height="3.10" fill="#5f9270"/><rect x="923.71" y="820.90" width="4.6" height="9.90" fill="#80ea7c"/><rect x="929.45" y="864.50" width="4.6" height="10.50" fill="#e0735a"/><rect x="929.45" y="859.80" width="4.6" height="4.70" fill="#5b8cc0"/><rect x="929.45" y="855.00" width="4.6" height="4.80" fill="#4e9a5a"/><rect x="929.45" y="849.50" width="4.6" height="5.50" fill="#6cb8ea"/><rect x="929.45" y="845.90" width="4.6" height="3.60" fill="#3d74ba"/><rect x="929.45" y="842.20" width="4.6" height="3.70" fill="#0e1b3c"/><rect x="929.45" y="838.20" width="4.6" height="4.00" fill="#6cc5c9"/><rect x="929.45" y="835.30" width="4.6" height="2.90" fill="#5f9270"/><rect x="929.45" y="823.20" width="4.6" height="12.10" fill="#80ea7c"/><rect x="935.20" y="855.00" width="4.6" height="20.00" fill="#e0735a"/><rect x="935.20" y="826.80" width="4.6" height="28.20" fill="#5b8cc0"/><rect x="935.20" y="813.20" width="4.6" height="13.60" fill="#4e9a5a"/><rect x="935.20" y="808.10" width="4.6" height="5.10" fill="#6cb8ea"/><rect x="935.20" y="804.70" width="4.6" height="3.40" fill="#3d74ba"/><rect x="935.20" y="800.70" width="4.6" height="4.00" fill="#0e1b3c"/><rect x="935.20" y="796.90" width="4.6" height="3.80" fill="#6cc5c9"/><rect x="935.20" y="793.30" width="4.6" height="3.60" fill="#5f9270"/><rect x="935.20" y="787.60" width="4.6" height="5.70" fill="#80ea7c"/><rect x="940.94" y="864.90" width="4.6" height="10.10" fill="#e0735a"/><rect x="940.94" y="833.00" width="4.6" height="31.90" fill="#5b8cc0"/><rect x="940.94" y="829.70" width="4.6" height="3.30" fill="#4e9a5a"/><rect x="940.94" y="824.30" width="4.6" height="5.40" fill="#6cb8ea"/><rect x="940.94" y="820.60" width="4.6" height="3.70" fill="#3d74ba"/><rect x="940.94" y="816.80" width="4.6" height="3.80" fill="#0e1b3c"/><rect x="940.94" y="813.20" width="4.6" height="3.60" fill="#6cc5c9"/><rect x="940.94" y="809.80" width="4.6" height="3.40" fill="#5f9270"/><rect x="940.94" y="803.20" width="4.6" height="6.60" fill="#80ea7c"/><rect x="946.69" y="863.00" width="4.6" height="12.00" fill="#e0735a"/><rect x="946.69" y="838.20" width="4.6" height="24.80" fill="#5b8cc0"/><rect x="946.69" y="834.20" width="4.6" height="4.00" fill="#4e9a5a"/><rect x="946.69" y="830.00" width="4.6" height="4.20" fill="#6cb8ea"/><rect x="946.69" y="826.30" width="4.6" height="3.70" fill="#3d74ba"/><rect x="946.69" y="822.50" width="4.6" height="3.80" fill="#0e1b3c"/><rect x="946.69" y="818.90" width="4.6" height="3.60" fill="#6cc5c9"/><rect x="946.69" y="816.00" width="4.6" height="2.90" fill="#5f9270"/><rect x="946.69" y="808.90" width="4.6" height="7.10" fill="#80ea7c"/><rect x="952.43" y="865.50" width="4.6" height="9.50" fill="#e0735a"/><rect x="952.43" y="858.90" width="4.6" height="6.60" fill="#5b8cc0"/><rect x="952.43" y="853.00" width="4.6" height="5.90" fill="#4e9a5a"/><rect x="952.43" y="848.20" width="4.6" height="4.80" fill="#6cb8ea"/><rect x="952.43" y="844.40" width="4.6" height="3.80" fill="#3d74ba"/><rect x="952.43" y="840.70" width="4.6" height="3.70" fill="#0e1b3c"/><rect x="952.43" y="837.00" width="4.6" height="3.70" fill="#6cc5c9"/><rect x="952.43" y="833.60" width="4.6" height="3.40" fill="#5f9270"/><rect x="952.43" y="821.10" width="4.6" height="12.50" fill="#80ea7c"/><rect x="958.18" y="863.70" width="4.6" height="11.30" fill="#e0735a"/><rect x="958.18" y="832.30" width="4.6" height="31.40" fill="#5b8cc0"/><rect x="958.18" y="825.10" width="4.6" height="7.20" fill="#4e9a5a"/><rect x="958.18" y="820.00" width="4.6" height="5.10" fill="#6cb8ea"/><rect x="958.18" y="816.00" width="4.6" height="4.00" fill="#3d74ba"/><rect x="958.18" y="812.60" width="4.6" height="3.40" fill="#0e1b3c"/><rect x="958.18" y="808.60" width="4.6" height="4.00" fill="#6cc5c9"/><rect x="958.18" y="805.80" width="4.6" height="2.80" fill="#5f9270"/><rect x="958.18" y="797.00" width="4.6" height="8.80" fill="#80ea7c"/><rect x="963.92" y="863.70" width="4.6" height="11.30" fill="#e0735a"/><rect x="963.92" y="832.30" width="4.6" height="31.40" fill="#5b8cc0"/><rect x="963.92" y="826.80" width="4.6" height="5.50" fill="#4e9a5a"/><rect x="963.92" y="820.00" width="4.6" height="6.80" fill="#6cb8ea"/><rect x="963.92" y="816.40" width="4.6" height="3.60" fill="#3d74ba"/><rect x="963.92" y="812.60" width="4.6" height="3.80" fill="#0e1b3c"/><rect x="963.92" y="809.20" width="4.6" height="3.40" fill="#6cc5c9"/><rect x="963.92" y="806.30" width="4.6" height="2.90" fill="#5f9270"/><rect x="963.92" y="799.00" width="4.6" height="7.30" fill="#80ea7c"/><rect x="969.67" y="854.10" width="4.6" height="20.90" fill="#e0735a"/><rect x="969.67" y="839.50" width="4.6" height="14.60" fill="#5b8cc0"/><rect x="969.67" y="835.00" width="4.6" height="4.50" fill="#4e9a5a"/><rect x="969.67" y="830.80" width="4.6" height="4.20" fill="#6cb8ea"/><rect x="969.67" y="827.40" width="4.6" height="3.40" fill="#3d74ba"/><rect x="969.67" y="823.60" width="4.6" height="3.80" fill="#0e1b3c"/><rect x="969.67" y="820.00" width="4.6" height="3.60" fill="#6cc5c9"/><rect x="969.67" y="816.00" width="4.6" height="4.00" fill="#5f9270"/><rect x="969.67" y="811.10" width="4.6" height="4.90" fill="#80ea7c"/><rect x="975.41" y="864.00" width="4.6" height="11.00" fill="#e0735a"/><rect x="975.41" y="847.20" width="4.6" height="16.80" fill="#5b8cc0"/><rect x="975.41" y="841.00" width="4.6" height="6.20" fill="#4e9a5a"/><rect x="975.41" y="835.80" width="4.6" height="5.20" fill="#6cb8ea"/><rect x="975.41" y="832.10" width="4.6" height="3.70" fill="#3d74ba"/><rect x="975.41" y="828.30" width="4.6" height="3.80" fill="#0e1b3c"/><rect x="975.41" y="825.00" width="4.6" height="3.30" fill="#6cc5c9"/><rect x="975.41" y="821.70" width="4.6" height="3.30" fill="#5f9270"/><rect x="975.41" y="815.30" width="4.6" height="6.40" fill="#80ea7c"/><rect x="981.15" y="864.90" width="4.6" height="10.10" fill="#e0735a"/><rect x="981.15" y="833.00" width="4.6" height="31.90" fill="#5b8cc0"/><rect x="981.15" y="820.00" width="4.6" height="13.00" fill="#4e9a5a"/><rect x="981.15" y="815.50" width="4.6" height="4.50" fill="#6cb8ea"/><rect x="981.15" y="811.80" width="4.6" height="3.70" fill="#3d74ba"/><rect x="981.15" y="808.10" width="4.6" height="3.70" fill="#0e1b3c"/><rect x="981.15" y="804.10" width="4.6" height="4.00" fill="#6cc5c9"/><rect x="981.15" y="800.90" width="4.6" height="3.20" fill="#5f9270"/><rect x="981.15" y="796.40" width="4.6" height="4.50" fill="#80ea7c"/><rect x="986.90" y="863.20" width="4.6" height="11.80" fill="#e0735a"/><rect x="986.90" y="831.90" width="4.6" height="31.30" fill="#5b8cc0"/><rect x="986.90" y="825.70" width="4.6" height="6.20" fill="#4e9a5a"/><rect x="986.90" y="821.70" width="4.6" height="4.00" fill="#6cb8ea"/><rect x="986.90" y="818.30" width="4.6" height="3.40" fill="#3d74ba"/><rect x="986.90" y="814.50" width="4.6" height="3.80" fill="#0e1b3c"/><rect x="986.90" y="810.30" width="4.6" height="4.20" fill="#6cc5c9"/><rect x="986.90" y="807.50" width="4.6" height="2.80" fill="#5f9270"/><rect x="986.90" y="801.80" width="4.6" height="5.70" fill="#80ea7c"/><rect x="992.64" y="863.80" width="4.6" height="11.20" fill="#e0735a"/><rect x="992.64" y="860.30" width="4.6" height="3.50" fill="#5b8cc0"/><rect x="992.64" y="852.70" width="4.6" height="7.60" fill="#4e9a5a"/><rect x="992.64" y="849.50" width="4.6" height="3.20" fill="#6cb8ea"/><rect x="992.64" y="845.90" width="4.6" height="3.60" fill="#3d74ba"/><rect x="992.64" y="842.20" width="4.6" height="3.70" fill="#0e1b3c"/><rect x="992.64" y="838.20" width="4.6" height="4.00" fill="#6cc5c9"/><rect x="992.64" y="835.30" width="4.6" height="2.90" fill="#5f9270"/><rect x="992.64" y="825.90" width="4.6" height="9.40" fill="#80ea7c"/><rect x="998.39" y="865.50" width="4.6" height="9.50" fill="#e0735a"/><rect x="998.39" y="837.60" width="4.6" height="27.90" fill="#5b8cc0"/><rect x="998.39" y="833.10" width="4.6" height="4.50" fill="#4e9a5a"/><rect x="998.39" y="826.80" width="4.6" height="6.30" fill="#6cb8ea"/><rect x="998.39" y="823.20" width="4.6" height="3.60" fill="#3d74ba"/><rect x="998.39" y="819.40" width="4.6" height="3.80" fill="#0e1b3c"/><rect x="998.39" y="816.00" width="4.6" height="3.40" fill="#6cc5c9"/><rect x="998.39" y="812.60" width="4.6" height="3.40" fill="#5f9270"/><rect x="998.39" y="803.50" width="4.6" height="9.10" fill="#80ea7c"/><rect x="1004.13" y="854.10" width="4.6" height="20.90" fill="#e0735a"/><rect x="1004.13" y="822.50" width="4.6" height="31.60" fill="#5b8cc0"/><rect x="1004.13" y="807.30" width="4.6" height="15.20" fill="#4e9a5a"/><rect x="1004.13" y="803.00" width="4.6" height="4.30" fill="#6cb8ea"/><rect x="1004.13" y="799.00" width="4.6" height="4.00" fill="#3d74ba"/><rect x="1004.13" y="795.60" width="4.6" height="3.40" fill="#0e1b3c"/><rect x="1004.13" y="791.60" width="4.6" height="4.00" fill="#6cc5c9"/><rect x="1004.13" y="787.60" width="4.6" height="4.00" fill="#5f9270"/><rect x="1004.13" y="781.90" width="4.6" height="5.70" fill="#80ea7c"/><rect x="1009.88" y="866.00" width="4.6" height="9.00" fill="#e0735a"/><rect x="1009.88" y="841.00" width="4.6" height="25.00" fill="#5b8cc0"/><rect x="1009.88" y="819.40" width="4.6" height="21.60" fill="#4e9a5a"/><rect x="1009.88" y="813.80" width="4.6" height="5.60" fill="#6cb8ea"/><rect x="1009.88" y="810.00" width="4.6" height="3.80" fill="#3d74ba"/><rect x="1009.88" y="806.40" width="4.6" height="3.60" fill="#0e1b3c"/><rect x="1009.88" y="803.00" width="4.6" height="3.40" fill="#6cc5c9"/><rect x="1009.88" y="799.50" width="4.6" height="3.50" fill="#5f9270"/><rect x="1009.88" y="793.00" width="4.6" height="6.50" fill="#80ea7c"/><rect x="1015.62" y="864.10" width="4.6" height="10.90" fill="#e0735a"/><rect x="1015.62" y="857.30" width="4.6" height="6.80" fill="#5b8cc0"/><rect x="1015.62" y="845.90" width="4.6" height="11.40" fill="#4e9a5a"/><rect x="1015.62" y="839.90" width="4.6" height="6.00" fill="#6cb8ea"/><rect x="1015.62" y="836.10" width="4.6" height="3.80" fill="#3d74ba"/><rect x="1015.62" y="832.50" width="4.6" height="3.60" fill="#0e1b3c"/><rect x="1015.62" y="828.90" width="4.6" height="3.60" fill="#6cc5c9"/><rect x="1015.62" y="825.70" width="4.6" height="3.20" fill="#5f9270"/><rect x="1015.62" y="819.40" width="4.6" height="6.30" fill="#80ea7c"/><rect x="1021.37" y="865.20" width="4.6" height="9.80" fill="#e0735a"/><rect x="1021.37" y="855.20" width="4.6" height="10.00" fill="#4e9a5a"/><rect x="1021.37" y="853.00" width="4.6" height="2.20" fill="#6cb8ea"/><rect x="1021.37" y="849.30" width="4.6" height="3.70" fill="#3d74ba"/><rect x="1021.37" y="845.60" width="4.6" height="3.70" fill="#0e1b3c"/><rect x="1021.37" y="841.80" width="4.6" height="3.80" fill="#6cc5c9"/><rect x="1021.37" y="838.80" width="4.6" height="3.00" fill="#5f9270"/><rect x="1021.37" y="832.30" width="4.6" height="6.50" fill="#80ea7c"/><rect x="1027.12" y="868.10" width="4.6" height="6.90" fill="#e0735a"/><rect x="1027.12" y="848.00" width="4.6" height="20.10" fill="#4e9a5a"/><rect x="1027.12" y="842.90" width="4.6" height="5.10" fill="#6cb8ea"/><rect x="1027.12" y="839.20" width="4.6" height="3.70" fill="#3d74ba"/><rect x="1027.12" y="835.50" width="4.6" height="3.70" fill="#0e1b3c"/><rect x="1027.12" y="831.50" width="4.6" height="4.00" fill="#6cc5c9"/><rect x="1027.12" y="828.30" width="4.6" height="3.20" fill="#5f9270"/><rect x="1027.12" y="806.70" width="4.6" height="21.60" fill="#80ea7c"/><rect x="1032.86" y="869.20" width="4.6" height="5.80" fill="#e0735a"/><rect x="1032.86" y="855.80" width="4.6" height="13.40" fill="#4e9a5a"/><rect x="1032.86" y="851.60" width="4.6" height="4.20" fill="#6cb8ea"/><rect x="1032.86" y="847.80" width="4.6" height="3.80" fill="#3d74ba"/><rect x="1032.86" y="844.40" width="4.6" height="3.40" fill="#0e1b3c"/><rect x="1032.86" y="840.00" width="4.6" height="4.40" fill="#6cc5c9"/><rect x="1032.86" y="837.20" width="4.6" height="2.80" fill="#5f9270"/><rect x="1032.86" y="810.00" width="4.6" height="27.20" fill="#80ea7c"/><rect x="1038.61" y="857.00" width="4.6" height="18.00" fill="#e0735a"/><rect x="1038.61" y="841.60" width="4.6" height="15.40" fill="#4e9a5a"/><rect x="1038.61" y="836.90" width="4.6" height="4.70" fill="#6cb8ea"/><rect x="1038.61" y="833.20" width="4.6" height="3.70" fill="#3d74ba"/><rect x="1038.61" y="829.20" width="4.6" height="4.00" fill="#0e1b3c"/><rect x="1038.61" y="825.10" width="4.6" height="4.10" fill="#6cc5c9"/><rect x="1038.61" y="821.40" width="4.6" height="3.70" fill="#5f9270"/><rect x="1038.61" y="806.20" width="4.6" height="15.20" fill="#80ea7c"/><rect x="1044.35" y="867.90" width="4.6" height="7.10" fill="#e0735a"/><rect x="1044.35" y="860.70" width="4.6" height="7.20" fill="#4e9a5a"/><rect x="1044.35" y="857.00" width="4.6" height="3.70" fill="#6cb8ea"/><rect x="1044.35" y="853.30" width="4.6" height="3.70" fill="#3d74ba"/><rect x="1044.35" y="849.60" width="4.6" height="3.70" fill="#0e1b3c"/><rect x="1044.35" y="845.60" width="4.6" height="4.00" fill="#6cc5c9"/><rect x="1044.35" y="842.10" width="4.6" height="3.50" fill="#5f9270"/><rect x="1044.35" y="826.40" width="4.6" height="15.70" fill="#80ea7c"/><rect x="1050.10" y="866.90" width="4.6" height="8.10" fill="#e0735a"/><rect x="1050.10" y="859.90" width="4.6" height="7.00" fill="#4e9a5a"/><rect x="1050.10" y="853.70" width="4.6" height="6.20" fill="#6cb8ea"/><rect x="1050.10" y="850.00" width="4.6" height="3.70" fill="#3d74ba"/><rect x="1050.10" y="846.60" width="4.6" height="3.40" fill="#0e1b3c"/><rect x="1050.10" y="842.90" width="4.6" height="3.70" fill="#6cc5c9"/><rect x="1050.10" y="839.70" width="4.6" height="3.20" fill="#5f9270"/><rect x="1050.10" y="828.20" width="4.6" height="11.50" fill="#80ea7c"/><rect x="1055.84" y="867.90" width="4.6" height="7.10" fill="#e0735a"/><rect x="1055.84" y="860.20" width="4.6" height="7.70" fill="#4e9a5a"/><rect x="1055.84" y="855.50" width="4.6" height="4.70" fill="#6cb8ea"/><rect x="1055.84" y="851.20" width="4.6" height="4.30" fill="#3d74ba"/><rect x="1055.84" y="847.80" width="4.6" height="3.40" fill="#0e1b3c"/><rect x="1055.84" y="844.10" width="4.6" height="3.70" fill="#6cc5c9"/><rect x="1055.84" y="840.90" width="4.6" height="3.20" fill="#5f9270"/><rect x="1055.84" y="830.10" width="4.6" height="10.80" fill="#80ea7c"/><rect x="1061.59" y="864.20" width="4.6" height="10.80" fill="#e0735a"/><rect x="1061.59" y="856.20" width="4.6" height="8.00" fill="#4e9a5a"/><rect x="1061.59" y="851.80" width="4.6" height="4.40" fill="#6cb8ea"/><rect x="1061.59" y="827.20" width="4.6" height="24.60" fill="#e0a03a"/><rect x="1061.59" y="823.50" width="4.6" height="3.70" fill="#3d74ba"/><rect x="1061.59" y="819.80" width="4.6" height="3.70" fill="#0e1b3c"/><rect x="1061.59" y="815.80" width="4.6" height="4.00" fill="#6cc5c9"/><rect x="1061.59" y="812.10" width="4.6" height="3.70" fill="#5f9270"/><rect x="1061.59" y="784.60" width="4.6" height="27.50" fill="#80ea7c"/><rect x="1067.33" y="859.30" width="4.6" height="15.70" fill="#e0735a"/><rect x="1067.33" y="854.50" width="4.6" height="4.80" fill="#4e9a5a"/><rect x="1067.33" y="849.10" width="4.6" height="5.40" fill="#6cb8ea"/><rect x="1067.33" y="820.50" width="4.6" height="28.60" fill="#e0a03a"/><rect x="1067.33" y="816.50" width="4.6" height="4.00" fill="#3d74ba"/><rect x="1067.33" y="812.70" width="4.6" height="3.80" fill="#0e1b3c"/><rect x="1067.33" y="809.00" width="4.6" height="3.70" fill="#6cc5c9"/><rect x="1067.33" y="805.70" width="4.6" height="3.30" fill="#5f9270"/><rect x="1067.33" y="781.70" width="4.6" height="24.00" fill="#80ea7c"/><rect x="1073.08" y="850.00" width="4.6" height="25.00" fill="#e0735a"/><rect x="1073.08" y="844.60" width="4.6" height="5.40" fill="#4e9a5a"/><rect x="1073.08" y="839.40" width="4.6" height="5.20" fill="#6cb8ea"/><rect x="1073.08" y="815.80" width="4.6" height="23.60" fill="#e0a03a"/><rect x="1073.08" y="812.10" width="4.6" height="3.70" fill="#3d74ba"/><rect x="1073.08" y="808.40" width="4.6" height="3.70" fill="#0e1b3c"/><rect x="1073.08" y="804.40" width="4.6" height="4.00" fill="#6cc5c9"/><rect x="1073.08" y="800.30" width="4.6" height="4.10" fill="#5f9270"/><rect x="1073.08" y="782.00" width="4.6" height="18.30" fill="#80ea7c"/><rect x="1078.82" y="859.90" width="4.6" height="15.10" fill="#e0735a"/><rect x="1078.82" y="855.40" width="4.6" height="4.50" fill="#4e9a5a"/><rect x="1078.82" y="849.40" width="4.6" height="6.00" fill="#6cb8ea"/><rect x="1078.82" y="830.20" width="4.6" height="19.20" fill="#e0a03a"/><rect x="1078.82" y="826.40" width="4.6" height="3.80" fill="#3d74ba"/><rect x="1078.82" y="822.80" width="4.6" height="3.60" fill="#0e1b3c"/><rect x="1078.82" y="818.80" width="4.6" height="4.00" fill="#6cc5c9"/><rect x="1078.82" y="815.70" width="4.6" height="3.10" fill="#5f9270"/><rect x="1078.82" y="798.80" width="4.6" height="16.90" fill="#80ea7c"/><rect x="1084.57" y="860.80" width="4.6" height="14.20" fill="#e0735a"/><rect x="1084.57" y="827.70" width="4.6" height="33.10" fill="#5b8cc0"/><rect x="1084.57" y="825.90" width="4.6" height="1.80" fill="#4e9a5a"/><rect x="1084.57" y="819.90" width="4.6" height="6.00" fill="#6cb8ea"/><rect x="1084.57" y="803.10" width="4.6" height="16.80" fill="#e0a03a"/><rect x="1084.57" y="799.60" width="4.6" height="3.50" fill="#3d74ba"/><rect x="1084.57" y="795.70" width="4.6" height="3.90" fill="#0e1b3c"/><rect x="1084.57" y="791.90" width="4.6" height="3.80" fill="#6cc5c9"/><rect x="1084.57" y="788.90" width="4.6" height="3.00" fill="#5f9270"/><rect x="1084.57" y="772.10" width="4.6" height="16.80" fill="#80ea7c"/><rect x="1090.31" y="859.10" width="4.6" height="15.90" fill="#e0735a"/><rect x="1090.31" y="827.70" width="4.6" height="31.40" fill="#5b8cc0"/><rect x="1090.31" y="821.20" width="4.6" height="6.50" fill="#4e9a5a"/><rect x="1090.31" y="814.80" width="4.6" height="6.40" fill="#6cb8ea"/><rect x="1090.31" y="797.00" width="4.6" height="17.80" fill="#e0a03a"/><rect x="1090.31" y="793.20" width="4.6" height="3.80" fill="#3d74ba"/><rect x="1090.31" y="789.70" width="4.6" height="3.50" fill="#0e1b3c"/><rect x="1090.31" y="785.80" width="4.6" height="3.90" fill="#6cc5c9"/><rect x="1090.31" y="782.40" width="4.6" height="3.40" fill="#5f9270"/><rect x="1090.31" y="762.10" width="4.6" height="20.30" fill="#80ea7c"/><rect x="1096.06" y="859.50" width="4.6" height="15.50" fill="#e0735a"/><rect x="1096.06" y="857.20" width="4.6" height="2.30" fill="#5b8cc0"/><rect x="1096.06" y="854.90" width="4.6" height="2.30" fill="#4e9a5a"/><rect x="1096.06" y="848.80" width="4.6" height="6.10" fill="#6cb8ea"/><rect x="1096.06" y="824.90" width="4.6" height="23.90" fill="#e0a03a"/><rect x="1096.06" y="820.70" width="4.6" height="4.20" fill="#3d74ba"/><rect x="1096.06" y="817.10" width="4.6" height="3.60" fill="#0e1b3c"/><rect x="1096.06" y="813.20" width="4.6" height="3.90" fill="#6cc5c9"/><rect x="1096.06" y="810.00" width="4.6" height="3.20" fill="#5f9270"/><rect x="1096.06" y="773.10" width="4.6" height="36.90" fill="#80ea7c"/><rect x="1101.80" y="863.00" width="4.6" height="12.00" fill="#e0735a"/><rect x="1101.80" y="833.90" width="4.6" height="29.10" fill="#5b8cc0"/><rect x="1101.80" y="829.80" width="4.6" height="4.10" fill="#4e9a5a"/><rect x="1101.80" y="825.10" width="4.6" height="4.70" fill="#6cb8ea"/><rect x="1101.80" y="806.50" width="4.6" height="18.60" fill="#e0a03a"/><rect x="1101.80" y="802.60" width="4.6" height="3.90" fill="#3d74ba"/><rect x="1101.80" y="799.00" width="4.6" height="3.60" fill="#0e1b3c"/><rect x="1101.80" y="795.40" width="4.6" height="3.60" fill="#6cc5c9"/><rect x="1101.80" y="791.90" width="4.6" height="3.50" fill="#5f9270"/><rect x="1101.80" y="769.90" width="4.6" height="22.00" fill="#80ea7c"/><rect x="1107.55" y="853.30" width="4.6" height="21.70" fill="#e0735a"/><rect x="1107.55" y="821.60" width="4.6" height="31.70" fill="#5b8cc0"/><rect x="1107.55" y="816.10" width="4.6" height="5.50" fill="#4e9a5a"/><rect x="1107.55" y="810.90" width="4.6" height="5.20" fill="#6cb8ea"/><rect x="1107.55" y="797.70" width="4.6" height="13.20" fill="#e0a03a"/><rect x="1107.55" y="793.80" width="4.6" height="3.90" fill="#3d74ba"/><rect x="1107.55" y="789.90" width="4.6" height="3.90" fill="#0e1b3c"/><rect x="1107.55" y="786.00" width="4.6" height="3.90" fill="#6cc5c9"/><rect x="1107.55" y="782.20" width="4.6" height="3.80" fill="#5f9270"/><rect x="1107.55" y="769.00" width="4.6" height="13.20" fill="#80ea7c"/><rect x="1113.29" y="861.70" width="4.6" height="13.30" fill="#e0735a"/><rect x="1113.29" y="838.40" width="4.6" height="23.30" fill="#5b8cc0"/><rect x="1113.29" y="832.40" width="4.6" height="6.00" fill="#4e9a5a"/><rect x="1113.29" y="829.80" width="4.6" height="2.60" fill="#6cb8ea"/><rect x="1113.29" y="800.30" width="4.6" height="29.50" fill="#e0a03a"/><rect x="1113.29" y="796.70" width="4.6" height="3.60" fill="#3d74ba"/><rect x="1113.29" y="792.80" width="4.6" height="3.90" fill="#0e1b3c"/><rect x="1113.29" y="788.90" width="4.6" height="3.90" fill="#6cc5c9"/><rect x="1113.29" y="785.80" width="4.6" height="3.10" fill="#5f9270"/><rect x="1113.29" y="766.40" width="4.6" height="19.40" fill="#80ea7c"/><rect x="1119.04" y="860.40" width="4.6" height="14.60" fill="#e0735a"/><rect x="1119.04" y="852.00" width="4.6" height="8.40" fill="#5b8cc0"/><rect x="1119.04" y="847.50" width="4.6" height="4.50" fill="#4e9a5a"/><rect x="1119.04" y="843.00" width="4.6" height="4.50" fill="#6cb8ea"/><rect x="1119.04" y="828.10" width="4.6" height="14.90" fill="#e0a03a"/><rect x="1119.04" y="824.20" width="4.6" height="3.90" fill="#3d74ba"/><rect x="1119.04" y="820.30" width="4.6" height="3.90" fill="#0e1b3c"/><rect x="1119.04" y="816.40" width="4.6" height="3.90" fill="#6cc5c9"/><rect x="1119.04" y="813.20" width="4.6" height="3.20" fill="#5f9270"/><rect x="1119.04" y="798.30" width="4.6" height="14.90" fill="#80ea7c"/><rect x="1124.78" y="865.00" width="4.6" height="10.00" fill="#e0735a"/><rect x="1124.78" y="833.30" width="4.6" height="31.70" fill="#5b8cc0"/><rect x="1124.78" y="832.00" width="4.6" height="1.30" fill="#4e9a5a"/><rect x="1124.78" y="829.40" width="4.6" height="2.60" fill="#6cb8ea"/><rect x="1124.78" y="817.40" width="4.6" height="12.00" fill="#e0a03a"/><rect x="1124.78" y="815.20" width="4.6" height="2.20" fill="#3d74ba"/><rect x="1124.78" y="813.00" width="4.6" height="2.20" fill="#0e1b3c"/><rect x="1124.78" y="810.60" width="4.6" height="2.40" fill="#6cc5c9"/><rect x="1124.78" y="808.70" width="4.6" height="1.90" fill="#5f9270"/><rect x="1124.78" y="804.20" width="4.6" height="4.50" fill="#80ea7c"/></svg></svg>
<div class="a" style="left:246px;top:947px;width:891px;height:10px;background:#fff;border-top:3px solid #d2d6de;border-radius:5px"></div>
<div class="a" style="left:1152px;top:87px;width:17px;height:864px;background:#f1f1f1;"></div>
<div class="a" style="left:1154px;top:104px;width:13px;height:318px;background:#c1c1c1;"></div>
<svg class="a" style="left:1155px;top:92px" width="11" height="8" viewBox="0 0 11 8"><path d="M1.8 6.5 L5.5 2.5 L9.2 6.5Z" fill="#a3a3a3"/></svg>
<svg class="a" style="left:1155px;top:937px" width="11" height="8" viewBox="0 0 11 8"><path d="M1.8 1.5 L5.5 5.5 L9.2 1.5Z" fill="#505050"/></svg>
<div class="a" style="left:0;top:0;width:1170px;height:951px;pointer-events:none;border:1px solid #9c9c9c;border-bottom-width:2px;border-radius:8px;box-shadow:0 0 0 6px #d8d8d8"></div></body></html>
